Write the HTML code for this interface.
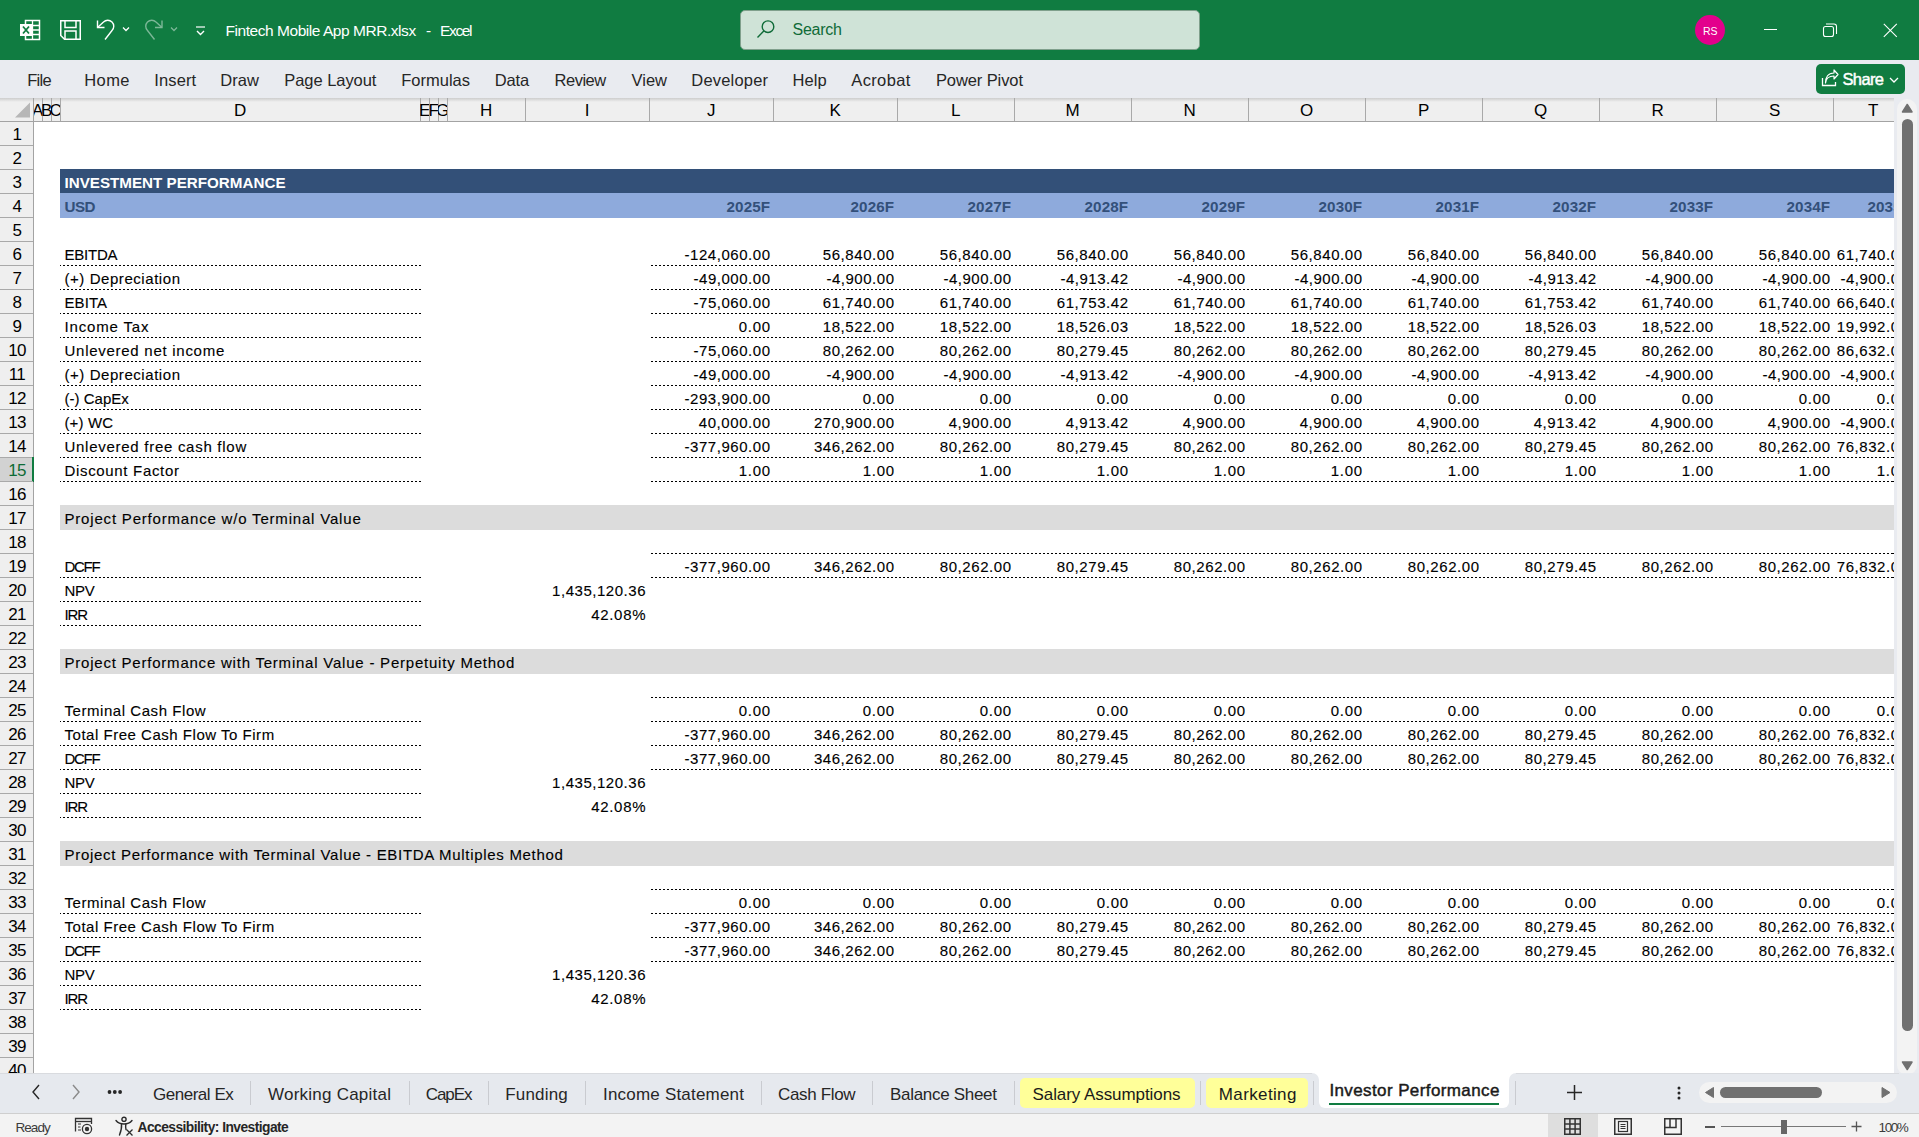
<!DOCTYPE html>
<html><head><meta charset="utf-8"><title>Excel</title>
<style>
html,body{margin:0;padding:0;}
body{width:1919px;height:1137px;position:relative;overflow:hidden;background:#fff;font-family:'Liberation Sans', sans-serif;}
</style></head><body>
<div style="position:absolute;left:0;top:0;width:1919px;height:60px;background:#107c41"></div><div style="position:absolute;left:740px;top:10px;width:458px;height:38px;background:#cfe3d7;border:1px solid #7fa08c;border-radius:5px"></div><div style="position:absolute;left:1695px;top:15px;width:30px;height:30px;border-radius:50%;background:#e3008c"></div><div style="position:absolute;left:0;top:60px;width:1919px;height:38px;background:#e9ebf0"></div><div style="position:absolute;left:1816px;top:64px;width:89px;height:30px;background:#107c41;border-radius:5px"></div><div style="position:absolute;left:0;top:98px;width:1894px;height:23px;background:#efefef"></div><div style="position:absolute;left:0;top:98px;width:1894px;height:4px;background:linear-gradient(#cdcdcd,#efefef)"></div><div style="position:absolute;left:0;top:121px;width:1894px;height:1px;background:#a3a3a3"></div><div style="position:absolute;left:0;top:122px;width:33px;height:951px;background:#efefef"></div><div style="position:absolute;left:33px;top:98px;width:1px;height:975px;background:#a3a3a3"></div><svg style="position:absolute;left:0;top:98px" width="33" height="23"><polygon points="30,4.5 30,19.5 15,19.5" fill="#b7b7b7"/></svg><div style="position:absolute;left:42px;top:98px;width:1px;height:23px;background:#a9a9a9"></div><div style="position:absolute;left:51px;top:98px;width:1px;height:23px;background:#a9a9a9"></div><div style="position:absolute;left:60px;top:98px;width:1px;height:23px;background:#a9a9a9"></div><div style="position:absolute;left:420px;top:98px;width:1px;height:23px;background:#a9a9a9"></div><div style="position:absolute;left:429px;top:98px;width:1px;height:23px;background:#a9a9a9"></div><div style="position:absolute;left:438px;top:98px;width:1px;height:23px;background:#a9a9a9"></div><div style="position:absolute;left:447px;top:98px;width:1px;height:23px;background:#a9a9a9"></div><div style="position:absolute;left:525px;top:98px;width:1px;height:23px;background:#a9a9a9"></div><div style="position:absolute;left:649px;top:98px;width:1px;height:23px;background:#a9a9a9"></div><div style="position:absolute;left:773px;top:98px;width:1px;height:23px;background:#a9a9a9"></div><div style="position:absolute;left:897px;top:98px;width:1px;height:23px;background:#a9a9a9"></div><div style="position:absolute;left:1014px;top:98px;width:1px;height:23px;background:#a9a9a9"></div><div style="position:absolute;left:1131px;top:98px;width:1px;height:23px;background:#a9a9a9"></div><div style="position:absolute;left:1248px;top:98px;width:1px;height:23px;background:#a9a9a9"></div><div style="position:absolute;left:1365px;top:98px;width:1px;height:23px;background:#a9a9a9"></div><div style="position:absolute;left:1482px;top:98px;width:1px;height:23px;background:#a9a9a9"></div><div style="position:absolute;left:1599px;top:98px;width:1px;height:23px;background:#a9a9a9"></div><div style="position:absolute;left:1716px;top:98px;width:1px;height:23px;background:#a9a9a9"></div><div style="position:absolute;left:1833px;top:98px;width:1px;height:23px;background:#a9a9a9"></div><div id="colhdr" style="position:absolute;left:34px;top:98px;width:1860px;height:23px;overflow:hidden"><div style="position:absolute;left:-1px;top:0;width:9px;height:23px;overflow:hidden"><div style="position:absolute;left:-20px;right:-20px;top:3.88px;text-align:center;font:17px/17px 'Liberation Sans', sans-serif;color:#000;letter-spacing:-0.3px">A</div></div><div style="position:absolute;left:8px;top:0;width:9px;height:23px;overflow:hidden"><div style="position:absolute;left:-20px;right:-20px;top:3.88px;text-align:center;font:17px/17px 'Liberation Sans', sans-serif;color:#000;letter-spacing:-0.3px">B</div></div><div style="position:absolute;left:17px;top:0;width:9px;height:23px;overflow:hidden"><div style="position:absolute;left:-20px;right:-20px;top:3.88px;text-align:center;font:17px/17px 'Liberation Sans', sans-serif;color:#000;letter-spacing:-0.3px">C</div></div><div style="position:absolute;left:26px;top:0;width:360px;height:23px;overflow:hidden"><div style="position:absolute;left:-20px;right:-20px;top:3.88px;text-align:center;font:17px/17px 'Liberation Sans', sans-serif;color:#000;letter-spacing:-0.3px">D</div></div><div style="position:absolute;left:386px;top:0;width:9px;height:23px;overflow:hidden"><div style="position:absolute;left:-20px;right:-20px;top:3.88px;text-align:center;font:17px/17px 'Liberation Sans', sans-serif;color:#000;letter-spacing:-0.3px">E</div></div><div style="position:absolute;left:395px;top:0;width:9px;height:23px;overflow:hidden"><div style="position:absolute;left:-20px;right:-20px;top:3.88px;text-align:center;font:17px/17px 'Liberation Sans', sans-serif;color:#000;letter-spacing:-0.3px">F</div></div><div style="position:absolute;left:404px;top:0;width:9px;height:23px;overflow:hidden"><div style="position:absolute;left:-20px;right:-20px;top:3.88px;text-align:center;font:17px/17px 'Liberation Sans', sans-serif;color:#000;letter-spacing:-0.3px">G</div></div><div style="position:absolute;left:413px;top:0;width:78px;height:23px;overflow:hidden"><div style="position:absolute;left:-20px;right:-20px;top:3.88px;text-align:center;font:17px/17px 'Liberation Sans', sans-serif;color:#000;letter-spacing:-0.3px">H</div></div><div style="position:absolute;left:491px;top:0;width:124px;height:23px;overflow:hidden"><div style="position:absolute;left:-20px;right:-20px;top:3.88px;text-align:center;font:17px/17px 'Liberation Sans', sans-serif;color:#000;letter-spacing:-0.3px">I</div></div><div style="position:absolute;left:615px;top:0;width:124px;height:23px;overflow:hidden"><div style="position:absolute;left:-20px;right:-20px;top:3.88px;text-align:center;font:17px/17px 'Liberation Sans', sans-serif;color:#000;letter-spacing:-0.3px">J</div></div><div style="position:absolute;left:739px;top:0;width:124px;height:23px;overflow:hidden"><div style="position:absolute;left:-20px;right:-20px;top:3.88px;text-align:center;font:17px/17px 'Liberation Sans', sans-serif;color:#000;letter-spacing:-0.3px">K</div></div><div style="position:absolute;left:863px;top:0;width:117px;height:23px;overflow:hidden"><div style="position:absolute;left:-20px;right:-20px;top:3.88px;text-align:center;font:17px/17px 'Liberation Sans', sans-serif;color:#000;letter-spacing:-0.3px">L</div></div><div style="position:absolute;left:980px;top:0;width:117px;height:23px;overflow:hidden"><div style="position:absolute;left:-20px;right:-20px;top:3.88px;text-align:center;font:17px/17px 'Liberation Sans', sans-serif;color:#000;letter-spacing:-0.3px">M</div></div><div style="position:absolute;left:1097px;top:0;width:117px;height:23px;overflow:hidden"><div style="position:absolute;left:-20px;right:-20px;top:3.88px;text-align:center;font:17px/17px 'Liberation Sans', sans-serif;color:#000;letter-spacing:-0.3px">N</div></div><div style="position:absolute;left:1214px;top:0;width:117px;height:23px;overflow:hidden"><div style="position:absolute;left:-20px;right:-20px;top:3.88px;text-align:center;font:17px/17px 'Liberation Sans', sans-serif;color:#000;letter-spacing:-0.3px">O</div></div><div style="position:absolute;left:1331px;top:0;width:117px;height:23px;overflow:hidden"><div style="position:absolute;left:-20px;right:-20px;top:3.88px;text-align:center;font:17px/17px 'Liberation Sans', sans-serif;color:#000;letter-spacing:-0.3px">P</div></div><div style="position:absolute;left:1448px;top:0;width:117px;height:23px;overflow:hidden"><div style="position:absolute;left:-20px;right:-20px;top:3.88px;text-align:center;font:17px/17px 'Liberation Sans', sans-serif;color:#000;letter-spacing:-0.3px">Q</div></div><div style="position:absolute;left:1565px;top:0;width:117px;height:23px;overflow:hidden"><div style="position:absolute;left:-20px;right:-20px;top:3.88px;text-align:center;font:17px/17px 'Liberation Sans', sans-serif;color:#000;letter-spacing:-0.3px">R</div></div><div style="position:absolute;left:1682px;top:0;width:117px;height:23px;overflow:hidden"><div style="position:absolute;left:-20px;right:-20px;top:3.88px;text-align:center;font:17px/17px 'Liberation Sans', sans-serif;color:#000;letter-spacing:-0.3px">S</div></div><div style="position:absolute;left:1799px;top:0;width:80px;height:23px;overflow:hidden"><div style="position:absolute;left:-20px;right:-20px;top:3.88px;text-align:center;font:17px/17px 'Liberation Sans', sans-serif;color:#000;letter-spacing:-0.3px">T</div></div></div><div style="position:absolute;left:0;top:145px;width:33px;height:1px;background:#a9a9a9"></div><div style="position:absolute;left:0;top:169px;width:33px;height:1px;background:#a9a9a9"></div><div style="position:absolute;left:0;top:193px;width:33px;height:1px;background:#a9a9a9"></div><div style="position:absolute;left:0;top:217px;width:33px;height:1px;background:#a9a9a9"></div><div style="position:absolute;left:0;top:241px;width:33px;height:1px;background:#a9a9a9"></div><div style="position:absolute;left:0;top:265px;width:33px;height:1px;background:#a9a9a9"></div><div style="position:absolute;left:0;top:289px;width:33px;height:1px;background:#a9a9a9"></div><div style="position:absolute;left:0;top:313px;width:33px;height:1px;background:#a9a9a9"></div><div style="position:absolute;left:0;top:337px;width:33px;height:1px;background:#a9a9a9"></div><div style="position:absolute;left:0;top:361px;width:33px;height:1px;background:#a9a9a9"></div><div style="position:absolute;left:0;top:385px;width:33px;height:1px;background:#a9a9a9"></div><div style="position:absolute;left:0;top:409px;width:33px;height:1px;background:#a9a9a9"></div><div style="position:absolute;left:0;top:433px;width:33px;height:1px;background:#a9a9a9"></div><div style="position:absolute;left:0;top:457px;width:33px;height:1px;background:#a9a9a9"></div><div style="position:absolute;left:0;top:458px;width:32px;height:23px;background:#d2d2d2"></div><div style="position:absolute;left:32px;top:457px;width:2px;height:25px;background:#107c41"></div><div style="position:absolute;left:0;top:481px;width:33px;height:1px;background:#a9a9a9"></div><div style="position:absolute;left:0;top:505px;width:33px;height:1px;background:#a9a9a9"></div><div style="position:absolute;left:0;top:529px;width:33px;height:1px;background:#a9a9a9"></div><div style="position:absolute;left:0;top:553px;width:33px;height:1px;background:#a9a9a9"></div><div style="position:absolute;left:0;top:577px;width:33px;height:1px;background:#a9a9a9"></div><div style="position:absolute;left:0;top:601px;width:33px;height:1px;background:#a9a9a9"></div><div style="position:absolute;left:0;top:625px;width:33px;height:1px;background:#a9a9a9"></div><div style="position:absolute;left:0;top:649px;width:33px;height:1px;background:#a9a9a9"></div><div style="position:absolute;left:0;top:673px;width:33px;height:1px;background:#a9a9a9"></div><div style="position:absolute;left:0;top:697px;width:33px;height:1px;background:#a9a9a9"></div><div style="position:absolute;left:0;top:721px;width:33px;height:1px;background:#a9a9a9"></div><div style="position:absolute;left:0;top:745px;width:33px;height:1px;background:#a9a9a9"></div><div style="position:absolute;left:0;top:769px;width:33px;height:1px;background:#a9a9a9"></div><div style="position:absolute;left:0;top:793px;width:33px;height:1px;background:#a9a9a9"></div><div style="position:absolute;left:0;top:817px;width:33px;height:1px;background:#a9a9a9"></div><div style="position:absolute;left:0;top:841px;width:33px;height:1px;background:#a9a9a9"></div><div style="position:absolute;left:0;top:865px;width:33px;height:1px;background:#a9a9a9"></div><div style="position:absolute;left:0;top:889px;width:33px;height:1px;background:#a9a9a9"></div><div style="position:absolute;left:0;top:913px;width:33px;height:1px;background:#a9a9a9"></div><div style="position:absolute;left:0;top:937px;width:33px;height:1px;background:#a9a9a9"></div><div style="position:absolute;left:0;top:961px;width:33px;height:1px;background:#a9a9a9"></div><div style="position:absolute;left:0;top:985px;width:33px;height:1px;background:#a9a9a9"></div><div style="position:absolute;left:0;top:1009px;width:33px;height:1px;background:#a9a9a9"></div><div style="position:absolute;left:0;top:1033px;width:33px;height:1px;background:#a9a9a9"></div><div style="position:absolute;left:0;top:1057px;width:33px;height:1px;background:#a9a9a9"></div><div style="position:absolute;left:0;top:0;width:33px;height:1073px;overflow:hidden"><div style="position:absolute;left:0;width:34px;top:125.88px;text-align:center;font:17px/17px 'Liberation Sans', sans-serif;color:#000;letter-spacing:-0.6px">1</div><div style="position:absolute;left:0;width:34px;top:149.88px;text-align:center;font:17px/17px 'Liberation Sans', sans-serif;color:#000;letter-spacing:-0.6px">2</div><div style="position:absolute;left:0;width:34px;top:173.88px;text-align:center;font:17px/17px 'Liberation Sans', sans-serif;color:#000;letter-spacing:-0.6px">3</div><div style="position:absolute;left:0;width:34px;top:197.88px;text-align:center;font:17px/17px 'Liberation Sans', sans-serif;color:#000;letter-spacing:-0.6px">4</div><div style="position:absolute;left:0;width:34px;top:221.88px;text-align:center;font:17px/17px 'Liberation Sans', sans-serif;color:#000;letter-spacing:-0.6px">5</div><div style="position:absolute;left:0;width:34px;top:245.88px;text-align:center;font:17px/17px 'Liberation Sans', sans-serif;color:#000;letter-spacing:-0.6px">6</div><div style="position:absolute;left:0;width:34px;top:269.88px;text-align:center;font:17px/17px 'Liberation Sans', sans-serif;color:#000;letter-spacing:-0.6px">7</div><div style="position:absolute;left:0;width:34px;top:293.88px;text-align:center;font:17px/17px 'Liberation Sans', sans-serif;color:#000;letter-spacing:-0.6px">8</div><div style="position:absolute;left:0;width:34px;top:317.88px;text-align:center;font:17px/17px 'Liberation Sans', sans-serif;color:#000;letter-spacing:-0.6px">9</div><div style="position:absolute;left:0;width:34px;top:341.88px;text-align:center;font:17px/17px 'Liberation Sans', sans-serif;color:#000;letter-spacing:-0.6px">10</div><div style="position:absolute;left:0;width:34px;top:365.88px;text-align:center;font:17px/17px 'Liberation Sans', sans-serif;color:#000;letter-spacing:-0.6px">11</div><div style="position:absolute;left:0;width:34px;top:389.88px;text-align:center;font:17px/17px 'Liberation Sans', sans-serif;color:#000;letter-spacing:-0.6px">12</div><div style="position:absolute;left:0;width:34px;top:413.88px;text-align:center;font:17px/17px 'Liberation Sans', sans-serif;color:#000;letter-spacing:-0.6px">13</div><div style="position:absolute;left:0;width:34px;top:437.88px;text-align:center;font:17px/17px 'Liberation Sans', sans-serif;color:#000;letter-spacing:-0.6px">14</div><div style="position:absolute;left:0;width:34px;top:461.88px;text-align:center;font:17px/17px 'Liberation Sans', sans-serif;color:#0e6b36;letter-spacing:-0.6px">15</div><div style="position:absolute;left:0;width:34px;top:485.88px;text-align:center;font:17px/17px 'Liberation Sans', sans-serif;color:#000;letter-spacing:-0.6px">16</div><div style="position:absolute;left:0;width:34px;top:509.88px;text-align:center;font:17px/17px 'Liberation Sans', sans-serif;color:#000;letter-spacing:-0.6px">17</div><div style="position:absolute;left:0;width:34px;top:533.88px;text-align:center;font:17px/17px 'Liberation Sans', sans-serif;color:#000;letter-spacing:-0.6px">18</div><div style="position:absolute;left:0;width:34px;top:557.88px;text-align:center;font:17px/17px 'Liberation Sans', sans-serif;color:#000;letter-spacing:-0.6px">19</div><div style="position:absolute;left:0;width:34px;top:581.88px;text-align:center;font:17px/17px 'Liberation Sans', sans-serif;color:#000;letter-spacing:-0.6px">20</div><div style="position:absolute;left:0;width:34px;top:605.88px;text-align:center;font:17px/17px 'Liberation Sans', sans-serif;color:#000;letter-spacing:-0.6px">21</div><div style="position:absolute;left:0;width:34px;top:629.88px;text-align:center;font:17px/17px 'Liberation Sans', sans-serif;color:#000;letter-spacing:-0.6px">22</div><div style="position:absolute;left:0;width:34px;top:653.88px;text-align:center;font:17px/17px 'Liberation Sans', sans-serif;color:#000;letter-spacing:-0.6px">23</div><div style="position:absolute;left:0;width:34px;top:677.88px;text-align:center;font:17px/17px 'Liberation Sans', sans-serif;color:#000;letter-spacing:-0.6px">24</div><div style="position:absolute;left:0;width:34px;top:701.88px;text-align:center;font:17px/17px 'Liberation Sans', sans-serif;color:#000;letter-spacing:-0.6px">25</div><div style="position:absolute;left:0;width:34px;top:725.88px;text-align:center;font:17px/17px 'Liberation Sans', sans-serif;color:#000;letter-spacing:-0.6px">26</div><div style="position:absolute;left:0;width:34px;top:749.88px;text-align:center;font:17px/17px 'Liberation Sans', sans-serif;color:#000;letter-spacing:-0.6px">27</div><div style="position:absolute;left:0;width:34px;top:773.88px;text-align:center;font:17px/17px 'Liberation Sans', sans-serif;color:#000;letter-spacing:-0.6px">28</div><div style="position:absolute;left:0;width:34px;top:797.88px;text-align:center;font:17px/17px 'Liberation Sans', sans-serif;color:#000;letter-spacing:-0.6px">29</div><div style="position:absolute;left:0;width:34px;top:821.88px;text-align:center;font:17px/17px 'Liberation Sans', sans-serif;color:#000;letter-spacing:-0.6px">30</div><div style="position:absolute;left:0;width:34px;top:845.88px;text-align:center;font:17px/17px 'Liberation Sans', sans-serif;color:#000;letter-spacing:-0.6px">31</div><div style="position:absolute;left:0;width:34px;top:869.88px;text-align:center;font:17px/17px 'Liberation Sans', sans-serif;color:#000;letter-spacing:-0.6px">32</div><div style="position:absolute;left:0;width:34px;top:893.88px;text-align:center;font:17px/17px 'Liberation Sans', sans-serif;color:#000;letter-spacing:-0.6px">33</div><div style="position:absolute;left:0;width:34px;top:917.88px;text-align:center;font:17px/17px 'Liberation Sans', sans-serif;color:#000;letter-spacing:-0.6px">34</div><div style="position:absolute;left:0;width:34px;top:941.88px;text-align:center;font:17px/17px 'Liberation Sans', sans-serif;color:#000;letter-spacing:-0.6px">35</div><div style="position:absolute;left:0;width:34px;top:965.88px;text-align:center;font:17px/17px 'Liberation Sans', sans-serif;color:#000;letter-spacing:-0.6px">36</div><div style="position:absolute;left:0;width:34px;top:989.88px;text-align:center;font:17px/17px 'Liberation Sans', sans-serif;color:#000;letter-spacing:-0.6px">37</div><div style="position:absolute;left:0;width:34px;top:1013.88px;text-align:center;font:17px/17px 'Liberation Sans', sans-serif;color:#000;letter-spacing:-0.6px">38</div><div style="position:absolute;left:0;width:34px;top:1037.88px;text-align:center;font:17px/17px 'Liberation Sans', sans-serif;color:#000;letter-spacing:-0.6px">39</div><div style="position:absolute;left:0;width:34px;top:1061.88px;text-align:center;font:17px/17px 'Liberation Sans', sans-serif;color:#000;letter-spacing:-0.6px">40</div></div><div style="position:absolute;left:34px;top:122px;width:1860px;height:951px;background:#fff"></div><div style="position:absolute;left:60px;top:169px;width:1834px;height:24px;background:#335078"></div><div style="position:absolute;left:60px;top:193px;width:1834px;height:25px;background:#8eaadc"></div><div style="position:absolute;left:60px;top:505px;width:1834px;height:25px;background:#dcdcdc"></div><div style="position:absolute;left:60px;top:649px;width:1834px;height:25px;background:#dcdcdc"></div><div style="position:absolute;left:60px;top:841px;width:1834px;height:25px;background:#dcdcdc"></div><div style="position:absolute;left:60px;top:265px;width:361px;height:1px;background:repeating-linear-gradient(90deg,#000 0 2px,transparent 2px 4px);background-position:-1px 0"></div><div style="position:absolute;left:649px;top:265px;width:1245px;height:1px;background:repeating-linear-gradient(90deg,#000 0 2px,transparent 2px 4px);background-position:-2px 0"></div><div style="position:absolute;left:60px;top:289px;width:361px;height:1px;background:repeating-linear-gradient(90deg,#000 0 2px,transparent 2px 4px);background-position:-1px 0"></div><div style="position:absolute;left:649px;top:289px;width:1245px;height:1px;background:repeating-linear-gradient(90deg,#000 0 2px,transparent 2px 4px);background-position:-2px 0"></div><div style="position:absolute;left:60px;top:313px;width:361px;height:1px;background:repeating-linear-gradient(90deg,#000 0 2px,transparent 2px 4px);background-position:-1px 0"></div><div style="position:absolute;left:649px;top:313px;width:1245px;height:1px;background:repeating-linear-gradient(90deg,#000 0 2px,transparent 2px 4px);background-position:-2px 0"></div><div style="position:absolute;left:60px;top:337px;width:361px;height:1px;background:repeating-linear-gradient(90deg,#000 0 2px,transparent 2px 4px);background-position:-1px 0"></div><div style="position:absolute;left:649px;top:337px;width:1245px;height:1px;background:repeating-linear-gradient(90deg,#000 0 2px,transparent 2px 4px);background-position:-2px 0"></div><div style="position:absolute;left:60px;top:361px;width:361px;height:1px;background:repeating-linear-gradient(90deg,#000 0 2px,transparent 2px 4px);background-position:-1px 0"></div><div style="position:absolute;left:649px;top:361px;width:1245px;height:1px;background:repeating-linear-gradient(90deg,#000 0 2px,transparent 2px 4px);background-position:-2px 0"></div><div style="position:absolute;left:60px;top:385px;width:361px;height:1px;background:repeating-linear-gradient(90deg,#000 0 2px,transparent 2px 4px);background-position:-1px 0"></div><div style="position:absolute;left:649px;top:385px;width:1245px;height:1px;background:repeating-linear-gradient(90deg,#000 0 2px,transparent 2px 4px);background-position:-2px 0"></div><div style="position:absolute;left:60px;top:409px;width:361px;height:1px;background:repeating-linear-gradient(90deg,#000 0 2px,transparent 2px 4px);background-position:-1px 0"></div><div style="position:absolute;left:649px;top:409px;width:1245px;height:1px;background:repeating-linear-gradient(90deg,#000 0 2px,transparent 2px 4px);background-position:-2px 0"></div><div style="position:absolute;left:60px;top:433px;width:361px;height:1px;background:repeating-linear-gradient(90deg,#000 0 2px,transparent 2px 4px);background-position:-1px 0"></div><div style="position:absolute;left:649px;top:433px;width:1245px;height:1px;background:repeating-linear-gradient(90deg,#000 0 2px,transparent 2px 4px);background-position:-2px 0"></div><div style="position:absolute;left:60px;top:457px;width:361px;height:1px;background:repeating-linear-gradient(90deg,#000 0 2px,transparent 2px 4px);background-position:-1px 0"></div><div style="position:absolute;left:649px;top:457px;width:1245px;height:1px;background:repeating-linear-gradient(90deg,#000 0 2px,transparent 2px 4px);background-position:-2px 0"></div><div style="position:absolute;left:60px;top:481px;width:361px;height:1px;background:repeating-linear-gradient(90deg,#000 0 2px,transparent 2px 4px);background-position:-1px 0"></div><div style="position:absolute;left:649px;top:481px;width:1245px;height:1px;background:repeating-linear-gradient(90deg,#000 0 2px,transparent 2px 4px);background-position:-2px 0"></div><div style="position:absolute;left:60px;top:577px;width:361px;height:1px;background:repeating-linear-gradient(90deg,#000 0 2px,transparent 2px 4px);background-position:-1px 0"></div><div style="position:absolute;left:649px;top:577px;width:1245px;height:1px;background:repeating-linear-gradient(90deg,#000 0 2px,transparent 2px 4px);background-position:-2px 0"></div><div style="position:absolute;left:60px;top:721px;width:361px;height:1px;background:repeating-linear-gradient(90deg,#000 0 2px,transparent 2px 4px);background-position:-1px 0"></div><div style="position:absolute;left:649px;top:721px;width:1245px;height:1px;background:repeating-linear-gradient(90deg,#000 0 2px,transparent 2px 4px);background-position:-2px 0"></div><div style="position:absolute;left:60px;top:745px;width:361px;height:1px;background:repeating-linear-gradient(90deg,#000 0 2px,transparent 2px 4px);background-position:-1px 0"></div><div style="position:absolute;left:649px;top:745px;width:1245px;height:1px;background:repeating-linear-gradient(90deg,#000 0 2px,transparent 2px 4px);background-position:-2px 0"></div><div style="position:absolute;left:60px;top:769px;width:361px;height:1px;background:repeating-linear-gradient(90deg,#000 0 2px,transparent 2px 4px);background-position:-1px 0"></div><div style="position:absolute;left:649px;top:769px;width:1245px;height:1px;background:repeating-linear-gradient(90deg,#000 0 2px,transparent 2px 4px);background-position:-2px 0"></div><div style="position:absolute;left:60px;top:913px;width:361px;height:1px;background:repeating-linear-gradient(90deg,#000 0 2px,transparent 2px 4px);background-position:-1px 0"></div><div style="position:absolute;left:649px;top:913px;width:1245px;height:1px;background:repeating-linear-gradient(90deg,#000 0 2px,transparent 2px 4px);background-position:-2px 0"></div><div style="position:absolute;left:60px;top:937px;width:361px;height:1px;background:repeating-linear-gradient(90deg,#000 0 2px,transparent 2px 4px);background-position:-1px 0"></div><div style="position:absolute;left:649px;top:937px;width:1245px;height:1px;background:repeating-linear-gradient(90deg,#000 0 2px,transparent 2px 4px);background-position:-2px 0"></div><div style="position:absolute;left:60px;top:961px;width:361px;height:1px;background:repeating-linear-gradient(90deg,#000 0 2px,transparent 2px 4px);background-position:-1px 0"></div><div style="position:absolute;left:649px;top:961px;width:1245px;height:1px;background:repeating-linear-gradient(90deg,#000 0 2px,transparent 2px 4px);background-position:-2px 0"></div><div style="position:absolute;left:649px;top:553px;width:1245px;height:1px;background:repeating-linear-gradient(90deg,#000 0 2px,transparent 2px 4px);background-position:-2px 0"></div><div style="position:absolute;left:649px;top:697px;width:1245px;height:1px;background:repeating-linear-gradient(90deg,#000 0 2px,transparent 2px 4px);background-position:-2px 0"></div><div style="position:absolute;left:649px;top:889px;width:1245px;height:1px;background:repeating-linear-gradient(90deg,#000 0 2px,transparent 2px 4px);background-position:-2px 0"></div><div style="position:absolute;left:60px;top:601px;width:361px;height:1px;background:repeating-linear-gradient(90deg,#000 0 2px,transparent 2px 4px);background-position:-1px 0"></div><div style="position:absolute;left:60px;top:793px;width:361px;height:1px;background:repeating-linear-gradient(90deg,#000 0 2px,transparent 2px 4px);background-position:-1px 0"></div><div style="position:absolute;left:60px;top:985px;width:361px;height:1px;background:repeating-linear-gradient(90deg,#000 0 2px,transparent 2px 4px);background-position:-1px 0"></div><div style="position:absolute;left:60px;top:625px;width:361px;height:1px;background:repeating-linear-gradient(90deg,#000 0 2px,transparent 2px 4px);background-position:-1px 0"></div><div style="position:absolute;left:60px;top:817px;width:361px;height:1px;background:repeating-linear-gradient(90deg,#000 0 2px,transparent 2px 4px);background-position:-1px 0"></div><div style="position:absolute;left:60px;top:1009px;width:361px;height:1px;background:repeating-linear-gradient(90deg,#000 0 2px,transparent 2px 4px);background-position:-1px 0"></div><div style="position:absolute;left:1894px;top:98px;width:25px;height:975px;background:#e9ebf0"></div><div style="position:absolute;left:1897px;top:99px;width:20px;height:976px;background:#f3f3f3;border-radius:10px"></div><svg style="position:absolute;left:1897px;top:99px" width="20" height="20"><polygon points="5.5,13 15,13 10.25,5.5" fill="#707070" stroke="#707070" stroke-width="1.5" stroke-linejoin="round"/></svg><div style="position:absolute;left:1902px;top:119px;width:11px;height:912px;background:#707070;border-radius:6px"></div><svg style="position:absolute;left:1897px;top:1055px" width="20" height="20"><polygon points="5.5,7 15,7 10.25,14.5" fill="#707070" stroke="#707070" stroke-width="1.5" stroke-linejoin="round"/></svg><div style="position:absolute;left:0;top:1073px;width:1919px;height:40px;background:#e6e9ee"></div><div style="position:absolute;left:0;top:1073px;width:1319px;height:1px;background:#d9dbdf"></div><div style="position:absolute;left:1509px;top:1073px;width:390px;height:1px;background:#d9dbdf"></div><div style="position:absolute;left:0;top:1113px;width:1919px;height:1px;background:#cfcfcf"></div><div style="position:absolute;left:0;top:1114px;width:1919px;height:23px;background:#f3f3f3"></div><div style="position:absolute;left:250px;top:1081px;width:1px;height:24px;background:#c9cbd0"></div><div style="position:absolute;left:409px;top:1081px;width:1px;height:24px;background:#c9cbd0"></div><div style="position:absolute;left:488px;top:1081px;width:1px;height:24px;background:#c9cbd0"></div><div style="position:absolute;left:585px;top:1081px;width:1px;height:24px;background:#c9cbd0"></div><div style="position:absolute;left:761px;top:1081px;width:1px;height:24px;background:#c9cbd0"></div><div style="position:absolute;left:872px;top:1081px;width:1px;height:24px;background:#c9cbd0"></div><div style="position:absolute;left:1014px;top:1081px;width:1px;height:24px;background:#c9cbd0"></div><div style="position:absolute;left:1200px;top:1081px;width:1px;height:24px;background:#c9cbd0"></div><div style="position:absolute;left:1313px;top:1081px;width:1px;height:24px;background:#c9cbd0"></div><div style="position:absolute;left:1515px;top:1081px;width:1px;height:24px;background:#c9cbd0"></div><div style="position:absolute;left:1020px;top:1078px;width:175px;height:30px;background:#ffff99;border-radius:5px"></div><div style="position:absolute;left:1206px;top:1078px;width:102px;height:30px;background:#ffff99;border-radius:5px"></div><div style="position:absolute;left:1319px;top:1073px;width:190px;height:35px;background:#fff;border-radius:0 0 6px 6px"></div><div style="position:absolute;left:1329px;top:1103px;width:170px;height:2px;background:#107c41"></div><div style="position:absolute;left:1312px;top:1073px;width:7px;height:7px;background:#fff"></div><div style="position:absolute;left:1312px;top:1073px;width:7px;height:7px;background:#e6e9ee;border-top-right-radius:7px"></div><div style="position:absolute;left:1509px;top:1073px;width:7px;height:7px;background:#fff"></div><div style="position:absolute;left:1509px;top:1073px;width:7px;height:7px;background:#e6e9ee;border-top-left-radius:7px"></div><svg style="position:absolute;left:1560px;top:1078px" width="30" height="30"><path d="M7 14.5H22M14.5 7V22" stroke="#262626" stroke-width="1.5"/></svg><svg style="position:absolute;left:1670px;top:1080px" width="20" height="24"><circle cx="9" cy="8" r="1.5" fill="#262626"/><circle cx="9" cy="13" r="1.5" fill="#262626"/><circle cx="9" cy="18" r="1.5" fill="#262626"/></svg><div style="position:absolute;left:1699px;top:1082px;width:198px;height:21px;background:#f3f3f3;border-radius:11px"></div><svg style="position:absolute;left:1699px;top:1082px" width="198" height="21"><polygon points="14.5,5.5 14.5,15.5 6.5,10.5" fill="#707070" stroke="#707070" stroke-linejoin="round"/><polygon points="183,5.5 183,15.5 191,10.5" fill="#707070" stroke="#707070" stroke-linejoin="round"/></svg><div style="position:absolute;left:1720px;top:1087px;width:102px;height:11px;background:#707070;border-radius:6px"></div><div style="position:absolute;left:1548px;top:1114px;width:50px;height:23px;background:#dedede"></div><div style="position:absolute;left:1721px;top:1126px;width:125px;height:1px;background:#777"></div><div style="position:absolute;left:1781px;top:1120px;width:6px;height:14px;background:#666"></div><div style="position:absolute;left:1705px;top:1126px;width:10px;height:1.5px;background:#555"></div><svg style="position:absolute;left:1849px;top:1119px" width="15" height="15"><path d="M2.5 7.5H12.5M7.5 2.5V12.5" stroke="#555" stroke-width="1.3"/></svg>
<svg style="position:absolute;left:18px;top:18px" width="24" height="24" viewBox="0 0 24 24">
 <rect x="7.5" y="2.5" width="14" height="19" fill="none" stroke="#fff" stroke-width="1.5"/>
 <path d="M7.5 7.5H21.5M7.5 12H21.5M7.5 16.5H21.5M14.5 2.5V21.5" stroke="#fff" stroke-width="1.3"/>
 <rect x="2" y="6" width="12" height="12" fill="#fff"/>
 <path d="M5 8.5L11 15.5M11 8.5L5 15.5" stroke="#107c41" stroke-width="1.8"/>
</svg>
<svg style="position:absolute;left:58px;top:18px" width="24" height="24" viewBox="0 0 24 24">
 <path d="M2.75 2.75H22.25V21.25H6.5L2.75 17.5Z" fill="none" stroke="#fff" stroke-width="1.5"/>
 <path d="M7 3V9.5H18V3" fill="none" stroke="#fff" stroke-width="1.5"/>
 <path d="M7 21V13H18V21" fill="none" stroke="#fff" stroke-width="1.5"/>
</svg>
<svg style="position:absolute;left:94px;top:18px" width="40" height="24" viewBox="0 0 40 24">
 <path d="M3.5 2.5V9.5H10.5" fill="none" stroke="#fff" stroke-width="1.4"/>
 <path d="M3.8 9.2L9.5 4A6 6 0 0 1 18 12.5L11 21.5" fill="none" stroke="#fff" stroke-width="1.4"/>
 <path d="M29 9.5L32 12.5L35 9.5" fill="none" stroke="#fff" stroke-width="1.3"/>
</svg>
<svg style="position:absolute;left:142px;top:18px" width="40" height="24" viewBox="0 0 40 24" opacity="0.45">
 <path d="M20 2.5V9.5H13" fill="none" stroke="#fff" stroke-width="1.4"/>
 <path d="M19.7 9.2L14 4A6 6 0 0 0 5.5 12.5L12.5 21.5" fill="none" stroke="#fff" stroke-width="1.4"/>
 <path d="M29 9.5L32 12.5L35 9.5" fill="none" stroke="#fff" stroke-width="1.3"/>
</svg>
<svg style="position:absolute;left:192px;top:18px" width="16" height="24" viewBox="0 0 16 24">
 <path d="M4 9H13" stroke="#fff" stroke-width="1.2"/>
 <path d="M5 13L8.5 16.5L12 13" fill="none" stroke="#fff" stroke-width="1.4"/>
</svg>
<svg style="position:absolute;left:754px;top:18px" width="24" height="24" viewBox="0 0 24 24">
 <circle cx="14" cy="8.7" r="5.8" fill="none" stroke="#0f6b38" stroke-width="1.4"/>
 <path d="M9.8 13L3.5 19.5" stroke="#0f6b38" stroke-width="1.4"/>
</svg>
<div style="position:absolute;left:1764px;top:29px;width:13px;height:1px;background:#fff"></div>
<svg style="position:absolute;left:1820px;top:20px" width="20" height="20" viewBox="0 0 20 20">
 <rect x="3.5" y="6.5" width="10" height="10" rx="2" fill="none" stroke="#fff" stroke-width="1.1"/>
 <path d="M6 4H14A2.5 2.5 0 0 1 16.5 6.5V14" fill="none" stroke="#fff" stroke-width="1.1"/>
</svg>
<svg style="position:absolute;left:1880px;top:20px" width="20" height="20" viewBox="0 0 20 20">
 <path d="M3.8 3.8L16.8 16.8M16.8 3.8L3.8 16.8" stroke="#fff" stroke-width="1.1"/>
</svg>
<svg style="position:absolute;left:1820px;top:68px" width="20" height="22" viewBox="0 0 20 22">
 <path d="M2.5 10V17.5H15.5V14" fill="none" stroke="#fff" stroke-width="1.3"/>
 <path d="M5.5 15C6 10 9 8 14 8V11L18 6.5L14 2V5C8 5 5.5 9 5.5 15Z" fill="none" stroke="#fff" stroke-width="1.2" stroke-linejoin="round"/>
</svg>
<svg style="position:absolute;left:1887px;top:74px" width="14" height="12" viewBox="0 0 14 12">
 <path d="M3 4L7 8L11 4" fill="none" stroke="#fff" stroke-width="1.3"/>
</svg>
<svg style="position:absolute;left:26px;top:1080px" width="20" height="24" viewBox="0 0 20 24">
 <path d="M13 5L7 12L13 19" fill="none" stroke="#262626" stroke-width="1.4"/>
</svg>
<svg style="position:absolute;left:66px;top:1080px" width="20" height="24" viewBox="0 0 20 24">
 <path d="M7 5L13 12L7 19" fill="none" stroke="#8a8a8a" stroke-width="1.4"/>
</svg>
<svg style="position:absolute;left:104px;top:1082px" width="22" height="20" viewBox="0 0 22 20">
 <circle cx="5.5" cy="10" r="1.9" fill="#262626"/><circle cx="10.8" cy="10" r="1.9" fill="#262626"/><circle cx="16.1" cy="10" r="1.9" fill="#262626"/>
</svg>
<svg style="position:absolute;left:73px;top:1116px" width="22" height="20" viewBox="0 0 22 20">
 <path d="M2.5 15.5V2.5H18.5V8" fill="none" stroke="#333" stroke-width="1.3"/>
 <path d="M2.5 5.5H18.5" stroke="#333" stroke-width="1.3"/>
 <path d="M5 8H8M5 11H7.5M5 14H8" stroke="#333" stroke-width="1.1"/>
 <circle cx="14" cy="13" r="4.6" fill="none" stroke="#333" stroke-width="1.3"/>
 <circle cx="14" cy="13" r="2.2" fill="#333"/>
</svg>
<svg style="position:absolute;left:113px;top:1116px" width="22" height="21" viewBox="0 0 22 21">
 <circle cx="11" cy="3.3" r="2.1" fill="none" stroke="#2b2b2b" stroke-width="1.4"/>
 <path d="M3 4.5C5 7 7.5 8 11 8C14.5 8 17 7 19 4.5" fill="none" stroke="#2b2b2b" stroke-width="1.4" stroke-linecap="round"/>
 <path d="M8.5 8.2C8.8 11 8.5 14 6.5 19M12.8 8.2C12.5 10.5 12.5 12 13 13.5" fill="none" stroke="#2b2b2b" stroke-width="1.4" stroke-linecap="round"/>
 <path d="M13.5 13.5L19.5 19.5M19.5 13.5L13.5 19.5" stroke="#2b2b2b" stroke-width="1.3"/>
</svg>
<svg style="position:absolute;left:1562px;top:1117px" width="20" height="19" viewBox="0 0 20 19">
 <rect x="2.75" y="1.75" width="15.5" height="15.5" fill="none" stroke="#333" stroke-width="1.5"/>
 <path d="M7.9 2V17M13.1 2V17M3 6.9H18M3 12.1H18" stroke="#333" stroke-width="1.5"/>
</svg>
<svg style="position:absolute;left:1612px;top:1117px" width="22" height="19" viewBox="0 0 22 19">
 <rect x="2.75" y="1.75" width="16.5" height="15.5" fill="none" stroke="#333" stroke-width="1.5"/>
 <rect x="6.5" y="4.5" width="9" height="10" fill="none" stroke="#333" stroke-width="1.2"/>
 <path d="M8.5 7.5H13.5M8.5 9.5H13.5M8.5 11.5H13.5" stroke="#333" stroke-width="1"/>
</svg>
<svg style="position:absolute;left:1662px;top:1117px" width="22" height="19" viewBox="0 0 22 19">
 <rect x="2.75" y="1.75" width="16.5" height="15.5" fill="none" stroke="#333" stroke-width="1.5"/>
 <path d="M8 2V10.5H14V2M3 10.5H8" fill="none" stroke="#333" stroke-width="1.5"/>
</svg>

<div style="position:absolute;left:0;top:0;width:1894px;height:1137px;overflow:hidden">
<span style="position:absolute;top:175.38px;font:700 15.2px/15.2px 'Liberation Sans', sans-serif;color:#fff;white-space:nowrap;letter-spacing:-0.003px;;left:64.50px;">INVESTMENT PERFORMANCE</span><span style="position:absolute;top:199.38px;font:700 15.2px/15.2px 'Liberation Sans', sans-serif;color:#33507a;white-space:nowrap;letter-spacing:-0.533px;;left:64.50px;">USD</span><span style="position:absolute;top:199.38px;font:700 15.2px/15.2px 'Liberation Sans', sans-serif;color:#33507a;white-space:nowrap;letter-spacing:0.109px;;right:1123.89px;text-align:right;">2025F</span><span style="position:absolute;top:199.38px;font:700 15.2px/15.2px 'Liberation Sans', sans-serif;color:#33507a;white-space:nowrap;letter-spacing:0.109px;;right:999.89px;text-align:right;">2026F</span><span style="position:absolute;top:199.38px;font:700 15.2px/15.2px 'Liberation Sans', sans-serif;color:#33507a;white-space:nowrap;letter-spacing:0.109px;;right:882.89px;text-align:right;">2027F</span><span style="position:absolute;top:199.38px;font:700 15.2px/15.2px 'Liberation Sans', sans-serif;color:#33507a;white-space:nowrap;letter-spacing:0.109px;;right:765.89px;text-align:right;">2028F</span><span style="position:absolute;top:199.38px;font:700 15.2px/15.2px 'Liberation Sans', sans-serif;color:#33507a;white-space:nowrap;letter-spacing:0.109px;;right:648.89px;text-align:right;">2029F</span><span style="position:absolute;top:199.38px;font:700 15.2px/15.2px 'Liberation Sans', sans-serif;color:#33507a;white-space:nowrap;letter-spacing:0.109px;;right:531.89px;text-align:right;">2030F</span><span style="position:absolute;top:199.38px;font:700 15.2px/15.2px 'Liberation Sans', sans-serif;color:#33507a;white-space:nowrap;letter-spacing:0.109px;;right:414.89px;text-align:right;">2031F</span><span style="position:absolute;top:199.38px;font:700 15.2px/15.2px 'Liberation Sans', sans-serif;color:#33507a;white-space:nowrap;letter-spacing:0.109px;;right:297.89px;text-align:right;">2032F</span><span style="position:absolute;top:199.38px;font:700 15.2px/15.2px 'Liberation Sans', sans-serif;color:#33507a;white-space:nowrap;letter-spacing:0.109px;;right:180.89px;text-align:right;">2033F</span><span style="position:absolute;top:199.38px;font:700 15.2px/15.2px 'Liberation Sans', sans-serif;color:#33507a;white-space:nowrap;letter-spacing:0.109px;;right:63.89px;text-align:right;">2034F</span><span style="position:absolute;top:199.38px;font:700 15.2px/15.2px 'Liberation Sans', sans-serif;color:#33507a;white-space:nowrap;letter-spacing:0.109px;;right:-17.11px;text-align:right;">2035F</span><span style="position:absolute;top:246.54px;font:400 15px/15px 'Liberation Sans', sans-serif;color:#000;white-space:nowrap;letter-spacing:-0.235px;-webkit-text-stroke:0.12px #000;left:64.50px;">EBITDA</span><span style="position:absolute;top:246.54px;font:400 15px/15px 'Liberation Sans', sans-serif;color:#000;white-space:nowrap;letter-spacing:0.534px;-webkit-text-stroke:0.12px #000;right:1123.47px;text-align:right;">-124,060.00</span><span style="position:absolute;top:246.54px;font:400 15px/15px 'Liberation Sans', sans-serif;color:#000;white-space:nowrap;letter-spacing:0.556px;-webkit-text-stroke:0.12px #000;right:999.44px;text-align:right;">56,840.00</span><span style="position:absolute;top:246.54px;font:400 15px/15px 'Liberation Sans', sans-serif;color:#000;white-space:nowrap;letter-spacing:0.556px;-webkit-text-stroke:0.12px #000;right:882.44px;text-align:right;">56,840.00</span><span style="position:absolute;top:246.54px;font:400 15px/15px 'Liberation Sans', sans-serif;color:#000;white-space:nowrap;letter-spacing:0.556px;-webkit-text-stroke:0.12px #000;right:765.44px;text-align:right;">56,840.00</span><span style="position:absolute;top:246.54px;font:400 15px/15px 'Liberation Sans', sans-serif;color:#000;white-space:nowrap;letter-spacing:0.556px;-webkit-text-stroke:0.12px #000;right:648.44px;text-align:right;">56,840.00</span><span style="position:absolute;top:246.54px;font:400 15px/15px 'Liberation Sans', sans-serif;color:#000;white-space:nowrap;letter-spacing:0.556px;-webkit-text-stroke:0.12px #000;right:531.44px;text-align:right;">56,840.00</span><span style="position:absolute;top:246.54px;font:400 15px/15px 'Liberation Sans', sans-serif;color:#000;white-space:nowrap;letter-spacing:0.556px;-webkit-text-stroke:0.12px #000;right:414.44px;text-align:right;">56,840.00</span><span style="position:absolute;top:246.54px;font:400 15px/15px 'Liberation Sans', sans-serif;color:#000;white-space:nowrap;letter-spacing:0.556px;-webkit-text-stroke:0.12px #000;right:297.44px;text-align:right;">56,840.00</span><span style="position:absolute;top:246.54px;font:400 15px/15px 'Liberation Sans', sans-serif;color:#000;white-space:nowrap;letter-spacing:0.556px;-webkit-text-stroke:0.12px #000;right:180.44px;text-align:right;">56,840.00</span><span style="position:absolute;top:246.54px;font:400 15px/15px 'Liberation Sans', sans-serif;color:#000;white-space:nowrap;letter-spacing:0.556px;-webkit-text-stroke:0.12px #000;right:63.44px;text-align:right;">56,840.00</span><span style="position:absolute;top:246.54px;font:400 15px/15px 'Liberation Sans', sans-serif;color:#000;white-space:nowrap;letter-spacing:0.556px;-webkit-text-stroke:0.12px #000;right:-14.56px;text-align:right;">61,740.00</span><span style="position:absolute;top:270.54px;font:400 15px/15px 'Liberation Sans', sans-serif;color:#000;white-space:nowrap;letter-spacing:0.558px;-webkit-text-stroke:0.12px #000;left:64.50px;">(+) Depreciation</span><span style="position:absolute;top:270.54px;font:400 15px/15px 'Liberation Sans', sans-serif;color:#000;white-space:nowrap;letter-spacing:0.531px;-webkit-text-stroke:0.12px #000;right:1123.47px;text-align:right;">-49,000.00</span><span style="position:absolute;top:270.54px;font:400 15px/15px 'Liberation Sans', sans-serif;color:#000;white-space:nowrap;letter-spacing:0.528px;-webkit-text-stroke:0.12px #000;right:999.47px;text-align:right;">-4,900.00</span><span style="position:absolute;top:270.54px;font:400 15px/15px 'Liberation Sans', sans-serif;color:#000;white-space:nowrap;letter-spacing:0.528px;-webkit-text-stroke:0.12px #000;right:882.47px;text-align:right;">-4,900.00</span><span style="position:absolute;top:270.54px;font:400 15px/15px 'Liberation Sans', sans-serif;color:#000;white-space:nowrap;letter-spacing:0.528px;-webkit-text-stroke:0.12px #000;right:765.47px;text-align:right;">-4,913.42</span><span style="position:absolute;top:270.54px;font:400 15px/15px 'Liberation Sans', sans-serif;color:#000;white-space:nowrap;letter-spacing:0.528px;-webkit-text-stroke:0.12px #000;right:648.47px;text-align:right;">-4,900.00</span><span style="position:absolute;top:270.54px;font:400 15px/15px 'Liberation Sans', sans-serif;color:#000;white-space:nowrap;letter-spacing:0.528px;-webkit-text-stroke:0.12px #000;right:531.47px;text-align:right;">-4,900.00</span><span style="position:absolute;top:270.54px;font:400 15px/15px 'Liberation Sans', sans-serif;color:#000;white-space:nowrap;letter-spacing:0.528px;-webkit-text-stroke:0.12px #000;right:414.47px;text-align:right;">-4,900.00</span><span style="position:absolute;top:270.54px;font:400 15px/15px 'Liberation Sans', sans-serif;color:#000;white-space:nowrap;letter-spacing:0.528px;-webkit-text-stroke:0.12px #000;right:297.47px;text-align:right;">-4,913.42</span><span style="position:absolute;top:270.54px;font:400 15px/15px 'Liberation Sans', sans-serif;color:#000;white-space:nowrap;letter-spacing:0.528px;-webkit-text-stroke:0.12px #000;right:180.47px;text-align:right;">-4,900.00</span><span style="position:absolute;top:270.54px;font:400 15px/15px 'Liberation Sans', sans-serif;color:#000;white-space:nowrap;letter-spacing:0.528px;-webkit-text-stroke:0.12px #000;right:63.47px;text-align:right;">-4,900.00</span><span style="position:absolute;top:270.54px;font:400 15px/15px 'Liberation Sans', sans-serif;color:#000;white-space:nowrap;letter-spacing:0.528px;-webkit-text-stroke:0.12px #000;right:-14.53px;text-align:right;">-4,900.00</span><span style="position:absolute;top:294.54px;font:400 15px/15px 'Liberation Sans', sans-serif;color:#000;white-space:nowrap;letter-spacing:0.067px;-webkit-text-stroke:0.12px #000;left:64.50px;">EBITA</span><span style="position:absolute;top:294.54px;font:400 15px/15px 'Liberation Sans', sans-serif;color:#000;white-space:nowrap;letter-spacing:0.531px;-webkit-text-stroke:0.12px #000;right:1123.47px;text-align:right;">-75,060.00</span><span style="position:absolute;top:294.54px;font:400 15px/15px 'Liberation Sans', sans-serif;color:#000;white-space:nowrap;letter-spacing:0.556px;-webkit-text-stroke:0.12px #000;right:999.44px;text-align:right;">61,740.00</span><span style="position:absolute;top:294.54px;font:400 15px/15px 'Liberation Sans', sans-serif;color:#000;white-space:nowrap;letter-spacing:0.556px;-webkit-text-stroke:0.12px #000;right:882.44px;text-align:right;">61,740.00</span><span style="position:absolute;top:294.54px;font:400 15px/15px 'Liberation Sans', sans-serif;color:#000;white-space:nowrap;letter-spacing:0.556px;-webkit-text-stroke:0.12px #000;right:765.44px;text-align:right;">61,753.42</span><span style="position:absolute;top:294.54px;font:400 15px/15px 'Liberation Sans', sans-serif;color:#000;white-space:nowrap;letter-spacing:0.556px;-webkit-text-stroke:0.12px #000;right:648.44px;text-align:right;">61,740.00</span><span style="position:absolute;top:294.54px;font:400 15px/15px 'Liberation Sans', sans-serif;color:#000;white-space:nowrap;letter-spacing:0.556px;-webkit-text-stroke:0.12px #000;right:531.44px;text-align:right;">61,740.00</span><span style="position:absolute;top:294.54px;font:400 15px/15px 'Liberation Sans', sans-serif;color:#000;white-space:nowrap;letter-spacing:0.556px;-webkit-text-stroke:0.12px #000;right:414.44px;text-align:right;">61,740.00</span><span style="position:absolute;top:294.54px;font:400 15px/15px 'Liberation Sans', sans-serif;color:#000;white-space:nowrap;letter-spacing:0.556px;-webkit-text-stroke:0.12px #000;right:297.44px;text-align:right;">61,753.42</span><span style="position:absolute;top:294.54px;font:400 15px/15px 'Liberation Sans', sans-serif;color:#000;white-space:nowrap;letter-spacing:0.556px;-webkit-text-stroke:0.12px #000;right:180.44px;text-align:right;">61,740.00</span><span style="position:absolute;top:294.54px;font:400 15px/15px 'Liberation Sans', sans-serif;color:#000;white-space:nowrap;letter-spacing:0.556px;-webkit-text-stroke:0.12px #000;right:63.44px;text-align:right;">61,740.00</span><span style="position:absolute;top:294.54px;font:400 15px/15px 'Liberation Sans', sans-serif;color:#000;white-space:nowrap;letter-spacing:0.556px;-webkit-text-stroke:0.12px #000;right:-14.56px;text-align:right;">66,640.00</span><span style="position:absolute;top:318.54px;font:400 15px/15px 'Liberation Sans', sans-serif;color:#000;white-space:nowrap;letter-spacing:0.839px;-webkit-text-stroke:0.12px #000;left:64.50px;">Income Tax</span><span style="position:absolute;top:318.54px;font:400 15px/15px 'Liberation Sans', sans-serif;color:#000;white-space:nowrap;letter-spacing:0.649px;-webkit-text-stroke:0.12px #000;right:1123.35px;text-align:right;">0.00</span><span style="position:absolute;top:318.54px;font:400 15px/15px 'Liberation Sans', sans-serif;color:#000;white-space:nowrap;letter-spacing:0.556px;-webkit-text-stroke:0.12px #000;right:999.44px;text-align:right;">18,522.00</span><span style="position:absolute;top:318.54px;font:400 15px/15px 'Liberation Sans', sans-serif;color:#000;white-space:nowrap;letter-spacing:0.556px;-webkit-text-stroke:0.12px #000;right:882.44px;text-align:right;">18,522.00</span><span style="position:absolute;top:318.54px;font:400 15px/15px 'Liberation Sans', sans-serif;color:#000;white-space:nowrap;letter-spacing:0.556px;-webkit-text-stroke:0.12px #000;right:765.44px;text-align:right;">18,526.03</span><span style="position:absolute;top:318.54px;font:400 15px/15px 'Liberation Sans', sans-serif;color:#000;white-space:nowrap;letter-spacing:0.556px;-webkit-text-stroke:0.12px #000;right:648.44px;text-align:right;">18,522.00</span><span style="position:absolute;top:318.54px;font:400 15px/15px 'Liberation Sans', sans-serif;color:#000;white-space:nowrap;letter-spacing:0.556px;-webkit-text-stroke:0.12px #000;right:531.44px;text-align:right;">18,522.00</span><span style="position:absolute;top:318.54px;font:400 15px/15px 'Liberation Sans', sans-serif;color:#000;white-space:nowrap;letter-spacing:0.556px;-webkit-text-stroke:0.12px #000;right:414.44px;text-align:right;">18,522.00</span><span style="position:absolute;top:318.54px;font:400 15px/15px 'Liberation Sans', sans-serif;color:#000;white-space:nowrap;letter-spacing:0.556px;-webkit-text-stroke:0.12px #000;right:297.44px;text-align:right;">18,526.03</span><span style="position:absolute;top:318.54px;font:400 15px/15px 'Liberation Sans', sans-serif;color:#000;white-space:nowrap;letter-spacing:0.556px;-webkit-text-stroke:0.12px #000;right:180.44px;text-align:right;">18,522.00</span><span style="position:absolute;top:318.54px;font:400 15px/15px 'Liberation Sans', sans-serif;color:#000;white-space:nowrap;letter-spacing:0.556px;-webkit-text-stroke:0.12px #000;right:63.44px;text-align:right;">18,522.00</span><span style="position:absolute;top:318.54px;font:400 15px/15px 'Liberation Sans', sans-serif;color:#000;white-space:nowrap;letter-spacing:0.556px;-webkit-text-stroke:0.12px #000;right:-14.56px;text-align:right;">19,992.00</span><span style="position:absolute;top:342.54px;font:400 15px/15px 'Liberation Sans', sans-serif;color:#000;white-space:nowrap;letter-spacing:0.728px;-webkit-text-stroke:0.12px #000;left:64.50px;">Unlevered net income</span><span style="position:absolute;top:342.54px;font:400 15px/15px 'Liberation Sans', sans-serif;color:#000;white-space:nowrap;letter-spacing:0.531px;-webkit-text-stroke:0.12px #000;right:1123.47px;text-align:right;">-75,060.00</span><span style="position:absolute;top:342.54px;font:400 15px/15px 'Liberation Sans', sans-serif;color:#000;white-space:nowrap;letter-spacing:0.556px;-webkit-text-stroke:0.12px #000;right:999.44px;text-align:right;">80,262.00</span><span style="position:absolute;top:342.54px;font:400 15px/15px 'Liberation Sans', sans-serif;color:#000;white-space:nowrap;letter-spacing:0.556px;-webkit-text-stroke:0.12px #000;right:882.44px;text-align:right;">80,262.00</span><span style="position:absolute;top:342.54px;font:400 15px/15px 'Liberation Sans', sans-serif;color:#000;white-space:nowrap;letter-spacing:0.556px;-webkit-text-stroke:0.12px #000;right:765.44px;text-align:right;">80,279.45</span><span style="position:absolute;top:342.54px;font:400 15px/15px 'Liberation Sans', sans-serif;color:#000;white-space:nowrap;letter-spacing:0.556px;-webkit-text-stroke:0.12px #000;right:648.44px;text-align:right;">80,262.00</span><span style="position:absolute;top:342.54px;font:400 15px/15px 'Liberation Sans', sans-serif;color:#000;white-space:nowrap;letter-spacing:0.556px;-webkit-text-stroke:0.12px #000;right:531.44px;text-align:right;">80,262.00</span><span style="position:absolute;top:342.54px;font:400 15px/15px 'Liberation Sans', sans-serif;color:#000;white-space:nowrap;letter-spacing:0.556px;-webkit-text-stroke:0.12px #000;right:414.44px;text-align:right;">80,262.00</span><span style="position:absolute;top:342.54px;font:400 15px/15px 'Liberation Sans', sans-serif;color:#000;white-space:nowrap;letter-spacing:0.556px;-webkit-text-stroke:0.12px #000;right:297.44px;text-align:right;">80,279.45</span><span style="position:absolute;top:342.54px;font:400 15px/15px 'Liberation Sans', sans-serif;color:#000;white-space:nowrap;letter-spacing:0.556px;-webkit-text-stroke:0.12px #000;right:180.44px;text-align:right;">80,262.00</span><span style="position:absolute;top:342.54px;font:400 15px/15px 'Liberation Sans', sans-serif;color:#000;white-space:nowrap;letter-spacing:0.556px;-webkit-text-stroke:0.12px #000;right:63.44px;text-align:right;">80,262.00</span><span style="position:absolute;top:342.54px;font:400 15px/15px 'Liberation Sans', sans-serif;color:#000;white-space:nowrap;letter-spacing:0.556px;-webkit-text-stroke:0.12px #000;right:-14.56px;text-align:right;">86,632.00</span><span style="position:absolute;top:366.54px;font:400 15px/15px 'Liberation Sans', sans-serif;color:#000;white-space:nowrap;letter-spacing:0.558px;-webkit-text-stroke:0.12px #000;left:64.50px;">(+) Depreciation</span><span style="position:absolute;top:366.54px;font:400 15px/15px 'Liberation Sans', sans-serif;color:#000;white-space:nowrap;letter-spacing:0.531px;-webkit-text-stroke:0.12px #000;right:1123.47px;text-align:right;">-49,000.00</span><span style="position:absolute;top:366.54px;font:400 15px/15px 'Liberation Sans', sans-serif;color:#000;white-space:nowrap;letter-spacing:0.528px;-webkit-text-stroke:0.12px #000;right:999.47px;text-align:right;">-4,900.00</span><span style="position:absolute;top:366.54px;font:400 15px/15px 'Liberation Sans', sans-serif;color:#000;white-space:nowrap;letter-spacing:0.528px;-webkit-text-stroke:0.12px #000;right:882.47px;text-align:right;">-4,900.00</span><span style="position:absolute;top:366.54px;font:400 15px/15px 'Liberation Sans', sans-serif;color:#000;white-space:nowrap;letter-spacing:0.528px;-webkit-text-stroke:0.12px #000;right:765.47px;text-align:right;">-4,913.42</span><span style="position:absolute;top:366.54px;font:400 15px/15px 'Liberation Sans', sans-serif;color:#000;white-space:nowrap;letter-spacing:0.528px;-webkit-text-stroke:0.12px #000;right:648.47px;text-align:right;">-4,900.00</span><span style="position:absolute;top:366.54px;font:400 15px/15px 'Liberation Sans', sans-serif;color:#000;white-space:nowrap;letter-spacing:0.528px;-webkit-text-stroke:0.12px #000;right:531.47px;text-align:right;">-4,900.00</span><span style="position:absolute;top:366.54px;font:400 15px/15px 'Liberation Sans', sans-serif;color:#000;white-space:nowrap;letter-spacing:0.528px;-webkit-text-stroke:0.12px #000;right:414.47px;text-align:right;">-4,900.00</span><span style="position:absolute;top:366.54px;font:400 15px/15px 'Liberation Sans', sans-serif;color:#000;white-space:nowrap;letter-spacing:0.528px;-webkit-text-stroke:0.12px #000;right:297.47px;text-align:right;">-4,913.42</span><span style="position:absolute;top:366.54px;font:400 15px/15px 'Liberation Sans', sans-serif;color:#000;white-space:nowrap;letter-spacing:0.528px;-webkit-text-stroke:0.12px #000;right:180.47px;text-align:right;">-4,900.00</span><span style="position:absolute;top:366.54px;font:400 15px/15px 'Liberation Sans', sans-serif;color:#000;white-space:nowrap;letter-spacing:0.528px;-webkit-text-stroke:0.12px #000;right:63.47px;text-align:right;">-4,900.00</span><span style="position:absolute;top:366.54px;font:400 15px/15px 'Liberation Sans', sans-serif;color:#000;white-space:nowrap;letter-spacing:0.528px;-webkit-text-stroke:0.12px #000;right:-14.53px;text-align:right;">-4,900.00</span><span style="position:absolute;top:390.54px;font:400 15px/15px 'Liberation Sans', sans-serif;color:#000;white-space:nowrap;letter-spacing:0.009px;-webkit-text-stroke:0.12px #000;left:64.50px;">(-) CapEx</span><span style="position:absolute;top:390.54px;font:400 15px/15px 'Liberation Sans', sans-serif;color:#000;white-space:nowrap;letter-spacing:0.534px;-webkit-text-stroke:0.12px #000;right:1123.47px;text-align:right;">-293,900.00</span><span style="position:absolute;top:390.54px;font:400 15px/15px 'Liberation Sans', sans-serif;color:#000;white-space:nowrap;letter-spacing:0.649px;-webkit-text-stroke:0.12px #000;right:999.35px;text-align:right;">0.00</span><span style="position:absolute;top:390.54px;font:400 15px/15px 'Liberation Sans', sans-serif;color:#000;white-space:nowrap;letter-spacing:0.649px;-webkit-text-stroke:0.12px #000;right:882.35px;text-align:right;">0.00</span><span style="position:absolute;top:390.54px;font:400 15px/15px 'Liberation Sans', sans-serif;color:#000;white-space:nowrap;letter-spacing:0.649px;-webkit-text-stroke:0.12px #000;right:765.35px;text-align:right;">0.00</span><span style="position:absolute;top:390.54px;font:400 15px/15px 'Liberation Sans', sans-serif;color:#000;white-space:nowrap;letter-spacing:0.649px;-webkit-text-stroke:0.12px #000;right:648.35px;text-align:right;">0.00</span><span style="position:absolute;top:390.54px;font:400 15px/15px 'Liberation Sans', sans-serif;color:#000;white-space:nowrap;letter-spacing:0.649px;-webkit-text-stroke:0.12px #000;right:531.35px;text-align:right;">0.00</span><span style="position:absolute;top:390.54px;font:400 15px/15px 'Liberation Sans', sans-serif;color:#000;white-space:nowrap;letter-spacing:0.649px;-webkit-text-stroke:0.12px #000;right:414.35px;text-align:right;">0.00</span><span style="position:absolute;top:390.54px;font:400 15px/15px 'Liberation Sans', sans-serif;color:#000;white-space:nowrap;letter-spacing:0.649px;-webkit-text-stroke:0.12px #000;right:297.35px;text-align:right;">0.00</span><span style="position:absolute;top:390.54px;font:400 15px/15px 'Liberation Sans', sans-serif;color:#000;white-space:nowrap;letter-spacing:0.649px;-webkit-text-stroke:0.12px #000;right:180.35px;text-align:right;">0.00</span><span style="position:absolute;top:390.54px;font:400 15px/15px 'Liberation Sans', sans-serif;color:#000;white-space:nowrap;letter-spacing:0.649px;-webkit-text-stroke:0.12px #000;right:63.35px;text-align:right;">0.00</span><span style="position:absolute;top:390.54px;font:400 15px/15px 'Liberation Sans', sans-serif;color:#000;white-space:nowrap;letter-spacing:0.649px;-webkit-text-stroke:0.12px #000;right:-14.65px;text-align:right;">0.00</span><span style="position:absolute;top:414.54px;font:400 15px/15px 'Liberation Sans', sans-serif;color:#000;white-space:nowrap;letter-spacing:0.118px;-webkit-text-stroke:0.12px #000;left:64.50px;">(+) WC</span><span style="position:absolute;top:414.54px;font:400 15px/15px 'Liberation Sans', sans-serif;color:#000;white-space:nowrap;letter-spacing:0.556px;-webkit-text-stroke:0.12px #000;right:1123.44px;text-align:right;">40,000.00</span><span style="position:absolute;top:414.54px;font:400 15px/15px 'Liberation Sans', sans-serif;color:#000;white-space:nowrap;letter-spacing:0.556px;-webkit-text-stroke:0.12px #000;right:999.44px;text-align:right;">270,900.00</span><span style="position:absolute;top:414.54px;font:400 15px/15px 'Liberation Sans', sans-serif;color:#000;white-space:nowrap;letter-spacing:0.556px;-webkit-text-stroke:0.12px #000;right:882.44px;text-align:right;">4,900.00</span><span style="position:absolute;top:414.54px;font:400 15px/15px 'Liberation Sans', sans-serif;color:#000;white-space:nowrap;letter-spacing:0.556px;-webkit-text-stroke:0.12px #000;right:765.44px;text-align:right;">4,913.42</span><span style="position:absolute;top:414.54px;font:400 15px/15px 'Liberation Sans', sans-serif;color:#000;white-space:nowrap;letter-spacing:0.556px;-webkit-text-stroke:0.12px #000;right:648.44px;text-align:right;">4,900.00</span><span style="position:absolute;top:414.54px;font:400 15px/15px 'Liberation Sans', sans-serif;color:#000;white-space:nowrap;letter-spacing:0.556px;-webkit-text-stroke:0.12px #000;right:531.44px;text-align:right;">4,900.00</span><span style="position:absolute;top:414.54px;font:400 15px/15px 'Liberation Sans', sans-serif;color:#000;white-space:nowrap;letter-spacing:0.556px;-webkit-text-stroke:0.12px #000;right:414.44px;text-align:right;">4,900.00</span><span style="position:absolute;top:414.54px;font:400 15px/15px 'Liberation Sans', sans-serif;color:#000;white-space:nowrap;letter-spacing:0.556px;-webkit-text-stroke:0.12px #000;right:297.44px;text-align:right;">4,913.42</span><span style="position:absolute;top:414.54px;font:400 15px/15px 'Liberation Sans', sans-serif;color:#000;white-space:nowrap;letter-spacing:0.556px;-webkit-text-stroke:0.12px #000;right:180.44px;text-align:right;">4,900.00</span><span style="position:absolute;top:414.54px;font:400 15px/15px 'Liberation Sans', sans-serif;color:#000;white-space:nowrap;letter-spacing:0.556px;-webkit-text-stroke:0.12px #000;right:63.44px;text-align:right;">4,900.00</span><span style="position:absolute;top:414.54px;font:400 15px/15px 'Liberation Sans', sans-serif;color:#000;white-space:nowrap;letter-spacing:0.528px;-webkit-text-stroke:0.12px #000;right:-14.53px;text-align:right;">-4,900.00</span><span style="position:absolute;top:438.54px;font:400 15px/15px 'Liberation Sans', sans-serif;color:#000;white-space:nowrap;letter-spacing:0.723px;-webkit-text-stroke:0.12px #000;left:64.50px;">Unlevered free cash flow</span><span style="position:absolute;top:438.54px;font:400 15px/15px 'Liberation Sans', sans-serif;color:#000;white-space:nowrap;letter-spacing:0.534px;-webkit-text-stroke:0.12px #000;right:1123.47px;text-align:right;">-377,960.00</span><span style="position:absolute;top:438.54px;font:400 15px/15px 'Liberation Sans', sans-serif;color:#000;white-space:nowrap;letter-spacing:0.556px;-webkit-text-stroke:0.12px #000;right:999.44px;text-align:right;">346,262.00</span><span style="position:absolute;top:438.54px;font:400 15px/15px 'Liberation Sans', sans-serif;color:#000;white-space:nowrap;letter-spacing:0.556px;-webkit-text-stroke:0.12px #000;right:882.44px;text-align:right;">80,262.00</span><span style="position:absolute;top:438.54px;font:400 15px/15px 'Liberation Sans', sans-serif;color:#000;white-space:nowrap;letter-spacing:0.556px;-webkit-text-stroke:0.12px #000;right:765.44px;text-align:right;">80,279.45</span><span style="position:absolute;top:438.54px;font:400 15px/15px 'Liberation Sans', sans-serif;color:#000;white-space:nowrap;letter-spacing:0.556px;-webkit-text-stroke:0.12px #000;right:648.44px;text-align:right;">80,262.00</span><span style="position:absolute;top:438.54px;font:400 15px/15px 'Liberation Sans', sans-serif;color:#000;white-space:nowrap;letter-spacing:0.556px;-webkit-text-stroke:0.12px #000;right:531.44px;text-align:right;">80,262.00</span><span style="position:absolute;top:438.54px;font:400 15px/15px 'Liberation Sans', sans-serif;color:#000;white-space:nowrap;letter-spacing:0.556px;-webkit-text-stroke:0.12px #000;right:414.44px;text-align:right;">80,262.00</span><span style="position:absolute;top:438.54px;font:400 15px/15px 'Liberation Sans', sans-serif;color:#000;white-space:nowrap;letter-spacing:0.556px;-webkit-text-stroke:0.12px #000;right:297.44px;text-align:right;">80,279.45</span><span style="position:absolute;top:438.54px;font:400 15px/15px 'Liberation Sans', sans-serif;color:#000;white-space:nowrap;letter-spacing:0.556px;-webkit-text-stroke:0.12px #000;right:180.44px;text-align:right;">80,262.00</span><span style="position:absolute;top:438.54px;font:400 15px/15px 'Liberation Sans', sans-serif;color:#000;white-space:nowrap;letter-spacing:0.556px;-webkit-text-stroke:0.12px #000;right:63.44px;text-align:right;">80,262.00</span><span style="position:absolute;top:438.54px;font:400 15px/15px 'Liberation Sans', sans-serif;color:#000;white-space:nowrap;letter-spacing:0.556px;-webkit-text-stroke:0.12px #000;right:-14.56px;text-align:right;">76,832.00</span><span style="position:absolute;top:462.54px;font:400 15px/15px 'Liberation Sans', sans-serif;color:#000;white-space:nowrap;letter-spacing:0.669px;-webkit-text-stroke:0.12px #000;left:64.50px;">Discount Factor</span><span style="position:absolute;top:462.54px;font:400 15px/15px 'Liberation Sans', sans-serif;color:#000;white-space:nowrap;letter-spacing:0.649px;-webkit-text-stroke:0.12px #000;right:1123.35px;text-align:right;">1.00</span><span style="position:absolute;top:462.54px;font:400 15px/15px 'Liberation Sans', sans-serif;color:#000;white-space:nowrap;letter-spacing:0.649px;-webkit-text-stroke:0.12px #000;right:999.35px;text-align:right;">1.00</span><span style="position:absolute;top:462.54px;font:400 15px/15px 'Liberation Sans', sans-serif;color:#000;white-space:nowrap;letter-spacing:0.649px;-webkit-text-stroke:0.12px #000;right:882.35px;text-align:right;">1.00</span><span style="position:absolute;top:462.54px;font:400 15px/15px 'Liberation Sans', sans-serif;color:#000;white-space:nowrap;letter-spacing:0.649px;-webkit-text-stroke:0.12px #000;right:765.35px;text-align:right;">1.00</span><span style="position:absolute;top:462.54px;font:400 15px/15px 'Liberation Sans', sans-serif;color:#000;white-space:nowrap;letter-spacing:0.649px;-webkit-text-stroke:0.12px #000;right:648.35px;text-align:right;">1.00</span><span style="position:absolute;top:462.54px;font:400 15px/15px 'Liberation Sans', sans-serif;color:#000;white-space:nowrap;letter-spacing:0.649px;-webkit-text-stroke:0.12px #000;right:531.35px;text-align:right;">1.00</span><span style="position:absolute;top:462.54px;font:400 15px/15px 'Liberation Sans', sans-serif;color:#000;white-space:nowrap;letter-spacing:0.649px;-webkit-text-stroke:0.12px #000;right:414.35px;text-align:right;">1.00</span><span style="position:absolute;top:462.54px;font:400 15px/15px 'Liberation Sans', sans-serif;color:#000;white-space:nowrap;letter-spacing:0.649px;-webkit-text-stroke:0.12px #000;right:297.35px;text-align:right;">1.00</span><span style="position:absolute;top:462.54px;font:400 15px/15px 'Liberation Sans', sans-serif;color:#000;white-space:nowrap;letter-spacing:0.649px;-webkit-text-stroke:0.12px #000;right:180.35px;text-align:right;">1.00</span><span style="position:absolute;top:462.54px;font:400 15px/15px 'Liberation Sans', sans-serif;color:#000;white-space:nowrap;letter-spacing:0.649px;-webkit-text-stroke:0.12px #000;right:63.35px;text-align:right;">1.00</span><span style="position:absolute;top:462.54px;font:400 15px/15px 'Liberation Sans', sans-serif;color:#000;white-space:nowrap;letter-spacing:0.649px;-webkit-text-stroke:0.12px #000;right:-14.65px;text-align:right;">1.00</span><span style="position:absolute;top:558.54px;font:400 15px/15px 'Liberation Sans', sans-serif;color:#000;white-space:nowrap;letter-spacing:-1.297px;-webkit-text-stroke:0.12px #000;left:64.50px;">DCFF</span><span style="position:absolute;top:558.54px;font:400 15px/15px 'Liberation Sans', sans-serif;color:#000;white-space:nowrap;letter-spacing:0.534px;-webkit-text-stroke:0.12px #000;right:1123.47px;text-align:right;">-377,960.00</span><span style="position:absolute;top:558.54px;font:400 15px/15px 'Liberation Sans', sans-serif;color:#000;white-space:nowrap;letter-spacing:0.556px;-webkit-text-stroke:0.12px #000;right:999.44px;text-align:right;">346,262.00</span><span style="position:absolute;top:558.54px;font:400 15px/15px 'Liberation Sans', sans-serif;color:#000;white-space:nowrap;letter-spacing:0.556px;-webkit-text-stroke:0.12px #000;right:882.44px;text-align:right;">80,262.00</span><span style="position:absolute;top:558.54px;font:400 15px/15px 'Liberation Sans', sans-serif;color:#000;white-space:nowrap;letter-spacing:0.556px;-webkit-text-stroke:0.12px #000;right:765.44px;text-align:right;">80,279.45</span><span style="position:absolute;top:558.54px;font:400 15px/15px 'Liberation Sans', sans-serif;color:#000;white-space:nowrap;letter-spacing:0.556px;-webkit-text-stroke:0.12px #000;right:648.44px;text-align:right;">80,262.00</span><span style="position:absolute;top:558.54px;font:400 15px/15px 'Liberation Sans', sans-serif;color:#000;white-space:nowrap;letter-spacing:0.556px;-webkit-text-stroke:0.12px #000;right:531.44px;text-align:right;">80,262.00</span><span style="position:absolute;top:558.54px;font:400 15px/15px 'Liberation Sans', sans-serif;color:#000;white-space:nowrap;letter-spacing:0.556px;-webkit-text-stroke:0.12px #000;right:414.44px;text-align:right;">80,262.00</span><span style="position:absolute;top:558.54px;font:400 15px/15px 'Liberation Sans', sans-serif;color:#000;white-space:nowrap;letter-spacing:0.556px;-webkit-text-stroke:0.12px #000;right:297.44px;text-align:right;">80,279.45</span><span style="position:absolute;top:558.54px;font:400 15px/15px 'Liberation Sans', sans-serif;color:#000;white-space:nowrap;letter-spacing:0.556px;-webkit-text-stroke:0.12px #000;right:180.44px;text-align:right;">80,262.00</span><span style="position:absolute;top:558.54px;font:400 15px/15px 'Liberation Sans', sans-serif;color:#000;white-space:nowrap;letter-spacing:0.556px;-webkit-text-stroke:0.12px #000;right:63.44px;text-align:right;">80,262.00</span><span style="position:absolute;top:558.54px;font:400 15px/15px 'Liberation Sans', sans-serif;color:#000;white-space:nowrap;letter-spacing:0.556px;-webkit-text-stroke:0.12px #000;right:-14.56px;text-align:right;">76,832.00</span><span style="position:absolute;top:702.54px;font:400 15px/15px 'Liberation Sans', sans-serif;color:#000;white-space:nowrap;letter-spacing:0.553px;-webkit-text-stroke:0.12px #000;left:64.50px;">Terminal Cash Flow</span><span style="position:absolute;top:702.54px;font:400 15px/15px 'Liberation Sans', sans-serif;color:#000;white-space:nowrap;letter-spacing:0.649px;-webkit-text-stroke:0.12px #000;right:1123.35px;text-align:right;">0.00</span><span style="position:absolute;top:702.54px;font:400 15px/15px 'Liberation Sans', sans-serif;color:#000;white-space:nowrap;letter-spacing:0.649px;-webkit-text-stroke:0.12px #000;right:999.35px;text-align:right;">0.00</span><span style="position:absolute;top:702.54px;font:400 15px/15px 'Liberation Sans', sans-serif;color:#000;white-space:nowrap;letter-spacing:0.649px;-webkit-text-stroke:0.12px #000;right:882.35px;text-align:right;">0.00</span><span style="position:absolute;top:702.54px;font:400 15px/15px 'Liberation Sans', sans-serif;color:#000;white-space:nowrap;letter-spacing:0.649px;-webkit-text-stroke:0.12px #000;right:765.35px;text-align:right;">0.00</span><span style="position:absolute;top:702.54px;font:400 15px/15px 'Liberation Sans', sans-serif;color:#000;white-space:nowrap;letter-spacing:0.649px;-webkit-text-stroke:0.12px #000;right:648.35px;text-align:right;">0.00</span><span style="position:absolute;top:702.54px;font:400 15px/15px 'Liberation Sans', sans-serif;color:#000;white-space:nowrap;letter-spacing:0.649px;-webkit-text-stroke:0.12px #000;right:531.35px;text-align:right;">0.00</span><span style="position:absolute;top:702.54px;font:400 15px/15px 'Liberation Sans', sans-serif;color:#000;white-space:nowrap;letter-spacing:0.649px;-webkit-text-stroke:0.12px #000;right:414.35px;text-align:right;">0.00</span><span style="position:absolute;top:702.54px;font:400 15px/15px 'Liberation Sans', sans-serif;color:#000;white-space:nowrap;letter-spacing:0.649px;-webkit-text-stroke:0.12px #000;right:297.35px;text-align:right;">0.00</span><span style="position:absolute;top:702.54px;font:400 15px/15px 'Liberation Sans', sans-serif;color:#000;white-space:nowrap;letter-spacing:0.649px;-webkit-text-stroke:0.12px #000;right:180.35px;text-align:right;">0.00</span><span style="position:absolute;top:702.54px;font:400 15px/15px 'Liberation Sans', sans-serif;color:#000;white-space:nowrap;letter-spacing:0.649px;-webkit-text-stroke:0.12px #000;right:63.35px;text-align:right;">0.00</span><span style="position:absolute;top:702.54px;font:400 15px/15px 'Liberation Sans', sans-serif;color:#000;white-space:nowrap;letter-spacing:0.649px;-webkit-text-stroke:0.12px #000;right:-14.65px;text-align:right;">0.00</span><span style="position:absolute;top:726.54px;font:400 15px/15px 'Liberation Sans', sans-serif;color:#000;white-space:nowrap;letter-spacing:0.519px;-webkit-text-stroke:0.12px #000;left:64.50px;">Total Free Cash Flow To Firm</span><span style="position:absolute;top:726.54px;font:400 15px/15px 'Liberation Sans', sans-serif;color:#000;white-space:nowrap;letter-spacing:0.534px;-webkit-text-stroke:0.12px #000;right:1123.47px;text-align:right;">-377,960.00</span><span style="position:absolute;top:726.54px;font:400 15px/15px 'Liberation Sans', sans-serif;color:#000;white-space:nowrap;letter-spacing:0.556px;-webkit-text-stroke:0.12px #000;right:999.44px;text-align:right;">346,262.00</span><span style="position:absolute;top:726.54px;font:400 15px/15px 'Liberation Sans', sans-serif;color:#000;white-space:nowrap;letter-spacing:0.556px;-webkit-text-stroke:0.12px #000;right:882.44px;text-align:right;">80,262.00</span><span style="position:absolute;top:726.54px;font:400 15px/15px 'Liberation Sans', sans-serif;color:#000;white-space:nowrap;letter-spacing:0.556px;-webkit-text-stroke:0.12px #000;right:765.44px;text-align:right;">80,279.45</span><span style="position:absolute;top:726.54px;font:400 15px/15px 'Liberation Sans', sans-serif;color:#000;white-space:nowrap;letter-spacing:0.556px;-webkit-text-stroke:0.12px #000;right:648.44px;text-align:right;">80,262.00</span><span style="position:absolute;top:726.54px;font:400 15px/15px 'Liberation Sans', sans-serif;color:#000;white-space:nowrap;letter-spacing:0.556px;-webkit-text-stroke:0.12px #000;right:531.44px;text-align:right;">80,262.00</span><span style="position:absolute;top:726.54px;font:400 15px/15px 'Liberation Sans', sans-serif;color:#000;white-space:nowrap;letter-spacing:0.556px;-webkit-text-stroke:0.12px #000;right:414.44px;text-align:right;">80,262.00</span><span style="position:absolute;top:726.54px;font:400 15px/15px 'Liberation Sans', sans-serif;color:#000;white-space:nowrap;letter-spacing:0.556px;-webkit-text-stroke:0.12px #000;right:297.44px;text-align:right;">80,279.45</span><span style="position:absolute;top:726.54px;font:400 15px/15px 'Liberation Sans', sans-serif;color:#000;white-space:nowrap;letter-spacing:0.556px;-webkit-text-stroke:0.12px #000;right:180.44px;text-align:right;">80,262.00</span><span style="position:absolute;top:726.54px;font:400 15px/15px 'Liberation Sans', sans-serif;color:#000;white-space:nowrap;letter-spacing:0.556px;-webkit-text-stroke:0.12px #000;right:63.44px;text-align:right;">80,262.00</span><span style="position:absolute;top:726.54px;font:400 15px/15px 'Liberation Sans', sans-serif;color:#000;white-space:nowrap;letter-spacing:0.556px;-webkit-text-stroke:0.12px #000;right:-14.56px;text-align:right;">76,832.00</span><span style="position:absolute;top:750.54px;font:400 15px/15px 'Liberation Sans', sans-serif;color:#000;white-space:nowrap;letter-spacing:-1.297px;-webkit-text-stroke:0.12px #000;left:64.50px;">DCFF</span><span style="position:absolute;top:750.54px;font:400 15px/15px 'Liberation Sans', sans-serif;color:#000;white-space:nowrap;letter-spacing:0.534px;-webkit-text-stroke:0.12px #000;right:1123.47px;text-align:right;">-377,960.00</span><span style="position:absolute;top:750.54px;font:400 15px/15px 'Liberation Sans', sans-serif;color:#000;white-space:nowrap;letter-spacing:0.556px;-webkit-text-stroke:0.12px #000;right:999.44px;text-align:right;">346,262.00</span><span style="position:absolute;top:750.54px;font:400 15px/15px 'Liberation Sans', sans-serif;color:#000;white-space:nowrap;letter-spacing:0.556px;-webkit-text-stroke:0.12px #000;right:882.44px;text-align:right;">80,262.00</span><span style="position:absolute;top:750.54px;font:400 15px/15px 'Liberation Sans', sans-serif;color:#000;white-space:nowrap;letter-spacing:0.556px;-webkit-text-stroke:0.12px #000;right:765.44px;text-align:right;">80,279.45</span><span style="position:absolute;top:750.54px;font:400 15px/15px 'Liberation Sans', sans-serif;color:#000;white-space:nowrap;letter-spacing:0.556px;-webkit-text-stroke:0.12px #000;right:648.44px;text-align:right;">80,262.00</span><span style="position:absolute;top:750.54px;font:400 15px/15px 'Liberation Sans', sans-serif;color:#000;white-space:nowrap;letter-spacing:0.556px;-webkit-text-stroke:0.12px #000;right:531.44px;text-align:right;">80,262.00</span><span style="position:absolute;top:750.54px;font:400 15px/15px 'Liberation Sans', sans-serif;color:#000;white-space:nowrap;letter-spacing:0.556px;-webkit-text-stroke:0.12px #000;right:414.44px;text-align:right;">80,262.00</span><span style="position:absolute;top:750.54px;font:400 15px/15px 'Liberation Sans', sans-serif;color:#000;white-space:nowrap;letter-spacing:0.556px;-webkit-text-stroke:0.12px #000;right:297.44px;text-align:right;">80,279.45</span><span style="position:absolute;top:750.54px;font:400 15px/15px 'Liberation Sans', sans-serif;color:#000;white-space:nowrap;letter-spacing:0.556px;-webkit-text-stroke:0.12px #000;right:180.44px;text-align:right;">80,262.00</span><span style="position:absolute;top:750.54px;font:400 15px/15px 'Liberation Sans', sans-serif;color:#000;white-space:nowrap;letter-spacing:0.556px;-webkit-text-stroke:0.12px #000;right:63.44px;text-align:right;">80,262.00</span><span style="position:absolute;top:750.54px;font:400 15px/15px 'Liberation Sans', sans-serif;color:#000;white-space:nowrap;letter-spacing:0.556px;-webkit-text-stroke:0.12px #000;right:-14.56px;text-align:right;">76,832.00</span><span style="position:absolute;top:894.54px;font:400 15px/15px 'Liberation Sans', sans-serif;color:#000;white-space:nowrap;letter-spacing:0.553px;-webkit-text-stroke:0.12px #000;left:64.50px;">Terminal Cash Flow</span><span style="position:absolute;top:894.54px;font:400 15px/15px 'Liberation Sans', sans-serif;color:#000;white-space:nowrap;letter-spacing:0.649px;-webkit-text-stroke:0.12px #000;right:1123.35px;text-align:right;">0.00</span><span style="position:absolute;top:894.54px;font:400 15px/15px 'Liberation Sans', sans-serif;color:#000;white-space:nowrap;letter-spacing:0.649px;-webkit-text-stroke:0.12px #000;right:999.35px;text-align:right;">0.00</span><span style="position:absolute;top:894.54px;font:400 15px/15px 'Liberation Sans', sans-serif;color:#000;white-space:nowrap;letter-spacing:0.649px;-webkit-text-stroke:0.12px #000;right:882.35px;text-align:right;">0.00</span><span style="position:absolute;top:894.54px;font:400 15px/15px 'Liberation Sans', sans-serif;color:#000;white-space:nowrap;letter-spacing:0.649px;-webkit-text-stroke:0.12px #000;right:765.35px;text-align:right;">0.00</span><span style="position:absolute;top:894.54px;font:400 15px/15px 'Liberation Sans', sans-serif;color:#000;white-space:nowrap;letter-spacing:0.649px;-webkit-text-stroke:0.12px #000;right:648.35px;text-align:right;">0.00</span><span style="position:absolute;top:894.54px;font:400 15px/15px 'Liberation Sans', sans-serif;color:#000;white-space:nowrap;letter-spacing:0.649px;-webkit-text-stroke:0.12px #000;right:531.35px;text-align:right;">0.00</span><span style="position:absolute;top:894.54px;font:400 15px/15px 'Liberation Sans', sans-serif;color:#000;white-space:nowrap;letter-spacing:0.649px;-webkit-text-stroke:0.12px #000;right:414.35px;text-align:right;">0.00</span><span style="position:absolute;top:894.54px;font:400 15px/15px 'Liberation Sans', sans-serif;color:#000;white-space:nowrap;letter-spacing:0.649px;-webkit-text-stroke:0.12px #000;right:297.35px;text-align:right;">0.00</span><span style="position:absolute;top:894.54px;font:400 15px/15px 'Liberation Sans', sans-serif;color:#000;white-space:nowrap;letter-spacing:0.649px;-webkit-text-stroke:0.12px #000;right:180.35px;text-align:right;">0.00</span><span style="position:absolute;top:894.54px;font:400 15px/15px 'Liberation Sans', sans-serif;color:#000;white-space:nowrap;letter-spacing:0.649px;-webkit-text-stroke:0.12px #000;right:63.35px;text-align:right;">0.00</span><span style="position:absolute;top:894.54px;font:400 15px/15px 'Liberation Sans', sans-serif;color:#000;white-space:nowrap;letter-spacing:0.649px;-webkit-text-stroke:0.12px #000;right:-14.65px;text-align:right;">0.00</span><span style="position:absolute;top:918.54px;font:400 15px/15px 'Liberation Sans', sans-serif;color:#000;white-space:nowrap;letter-spacing:0.519px;-webkit-text-stroke:0.12px #000;left:64.50px;">Total Free Cash Flow To Firm</span><span style="position:absolute;top:918.54px;font:400 15px/15px 'Liberation Sans', sans-serif;color:#000;white-space:nowrap;letter-spacing:0.534px;-webkit-text-stroke:0.12px #000;right:1123.47px;text-align:right;">-377,960.00</span><span style="position:absolute;top:918.54px;font:400 15px/15px 'Liberation Sans', sans-serif;color:#000;white-space:nowrap;letter-spacing:0.556px;-webkit-text-stroke:0.12px #000;right:999.44px;text-align:right;">346,262.00</span><span style="position:absolute;top:918.54px;font:400 15px/15px 'Liberation Sans', sans-serif;color:#000;white-space:nowrap;letter-spacing:0.556px;-webkit-text-stroke:0.12px #000;right:882.44px;text-align:right;">80,262.00</span><span style="position:absolute;top:918.54px;font:400 15px/15px 'Liberation Sans', sans-serif;color:#000;white-space:nowrap;letter-spacing:0.556px;-webkit-text-stroke:0.12px #000;right:765.44px;text-align:right;">80,279.45</span><span style="position:absolute;top:918.54px;font:400 15px/15px 'Liberation Sans', sans-serif;color:#000;white-space:nowrap;letter-spacing:0.556px;-webkit-text-stroke:0.12px #000;right:648.44px;text-align:right;">80,262.00</span><span style="position:absolute;top:918.54px;font:400 15px/15px 'Liberation Sans', sans-serif;color:#000;white-space:nowrap;letter-spacing:0.556px;-webkit-text-stroke:0.12px #000;right:531.44px;text-align:right;">80,262.00</span><span style="position:absolute;top:918.54px;font:400 15px/15px 'Liberation Sans', sans-serif;color:#000;white-space:nowrap;letter-spacing:0.556px;-webkit-text-stroke:0.12px #000;right:414.44px;text-align:right;">80,262.00</span><span style="position:absolute;top:918.54px;font:400 15px/15px 'Liberation Sans', sans-serif;color:#000;white-space:nowrap;letter-spacing:0.556px;-webkit-text-stroke:0.12px #000;right:297.44px;text-align:right;">80,279.45</span><span style="position:absolute;top:918.54px;font:400 15px/15px 'Liberation Sans', sans-serif;color:#000;white-space:nowrap;letter-spacing:0.556px;-webkit-text-stroke:0.12px #000;right:180.44px;text-align:right;">80,262.00</span><span style="position:absolute;top:918.54px;font:400 15px/15px 'Liberation Sans', sans-serif;color:#000;white-space:nowrap;letter-spacing:0.556px;-webkit-text-stroke:0.12px #000;right:63.44px;text-align:right;">80,262.00</span><span style="position:absolute;top:918.54px;font:400 15px/15px 'Liberation Sans', sans-serif;color:#000;white-space:nowrap;letter-spacing:0.556px;-webkit-text-stroke:0.12px #000;right:-14.56px;text-align:right;">76,832.00</span><span style="position:absolute;top:942.54px;font:400 15px/15px 'Liberation Sans', sans-serif;color:#000;white-space:nowrap;letter-spacing:-1.297px;-webkit-text-stroke:0.12px #000;left:64.50px;">DCFF</span><span style="position:absolute;top:942.54px;font:400 15px/15px 'Liberation Sans', sans-serif;color:#000;white-space:nowrap;letter-spacing:0.534px;-webkit-text-stroke:0.12px #000;right:1123.47px;text-align:right;">-377,960.00</span><span style="position:absolute;top:942.54px;font:400 15px/15px 'Liberation Sans', sans-serif;color:#000;white-space:nowrap;letter-spacing:0.556px;-webkit-text-stroke:0.12px #000;right:999.44px;text-align:right;">346,262.00</span><span style="position:absolute;top:942.54px;font:400 15px/15px 'Liberation Sans', sans-serif;color:#000;white-space:nowrap;letter-spacing:0.556px;-webkit-text-stroke:0.12px #000;right:882.44px;text-align:right;">80,262.00</span><span style="position:absolute;top:942.54px;font:400 15px/15px 'Liberation Sans', sans-serif;color:#000;white-space:nowrap;letter-spacing:0.556px;-webkit-text-stroke:0.12px #000;right:765.44px;text-align:right;">80,279.45</span><span style="position:absolute;top:942.54px;font:400 15px/15px 'Liberation Sans', sans-serif;color:#000;white-space:nowrap;letter-spacing:0.556px;-webkit-text-stroke:0.12px #000;right:648.44px;text-align:right;">80,262.00</span><span style="position:absolute;top:942.54px;font:400 15px/15px 'Liberation Sans', sans-serif;color:#000;white-space:nowrap;letter-spacing:0.556px;-webkit-text-stroke:0.12px #000;right:531.44px;text-align:right;">80,262.00</span><span style="position:absolute;top:942.54px;font:400 15px/15px 'Liberation Sans', sans-serif;color:#000;white-space:nowrap;letter-spacing:0.556px;-webkit-text-stroke:0.12px #000;right:414.44px;text-align:right;">80,262.00</span><span style="position:absolute;top:942.54px;font:400 15px/15px 'Liberation Sans', sans-serif;color:#000;white-space:nowrap;letter-spacing:0.556px;-webkit-text-stroke:0.12px #000;right:297.44px;text-align:right;">80,279.45</span><span style="position:absolute;top:942.54px;font:400 15px/15px 'Liberation Sans', sans-serif;color:#000;white-space:nowrap;letter-spacing:0.556px;-webkit-text-stroke:0.12px #000;right:180.44px;text-align:right;">80,262.00</span><span style="position:absolute;top:942.54px;font:400 15px/15px 'Liberation Sans', sans-serif;color:#000;white-space:nowrap;letter-spacing:0.556px;-webkit-text-stroke:0.12px #000;right:63.44px;text-align:right;">80,262.00</span><span style="position:absolute;top:942.54px;font:400 15px/15px 'Liberation Sans', sans-serif;color:#000;white-space:nowrap;letter-spacing:0.556px;-webkit-text-stroke:0.12px #000;right:-14.56px;text-align:right;">76,832.00</span><span style="position:absolute;top:582.54px;font:400 15px/15px 'Liberation Sans', sans-serif;color:#000;white-space:nowrap;letter-spacing:-0.296px;-webkit-text-stroke:0.12px #000;left:64.50px;">NPV</span><span style="position:absolute;top:582.54px;font:400 15px/15px 'Liberation Sans', sans-serif;color:#000;white-space:nowrap;letter-spacing:0.531px;-webkit-text-stroke:0.12px #000;right:1247.97px;text-align:right;">1,435,120.36</span><span style="position:absolute;top:774.54px;font:400 15px/15px 'Liberation Sans', sans-serif;color:#000;white-space:nowrap;letter-spacing:-0.296px;-webkit-text-stroke:0.12px #000;left:64.50px;">NPV</span><span style="position:absolute;top:774.54px;font:400 15px/15px 'Liberation Sans', sans-serif;color:#000;white-space:nowrap;letter-spacing:0.531px;-webkit-text-stroke:0.12px #000;right:1247.97px;text-align:right;">1,435,120.36</span><span style="position:absolute;top:966.54px;font:400 15px/15px 'Liberation Sans', sans-serif;color:#000;white-space:nowrap;letter-spacing:-0.296px;-webkit-text-stroke:0.12px #000;left:64.50px;">NPV</span><span style="position:absolute;top:966.54px;font:400 15px/15px 'Liberation Sans', sans-serif;color:#000;white-space:nowrap;letter-spacing:0.531px;-webkit-text-stroke:0.12px #000;right:1247.97px;text-align:right;">1,435,120.36</span><span style="position:absolute;top:606.54px;font:400 15px/15px 'Liberation Sans', sans-serif;color:#000;white-space:nowrap;letter-spacing:-1.166px;-webkit-text-stroke:0.12px #000;left:64.50px;">IRR</span><span style="position:absolute;top:606.54px;font:400 15px/15px 'Liberation Sans', sans-serif;color:#000;white-space:nowrap;letter-spacing:0.678px;-webkit-text-stroke:0.12px #000;right:1247.82px;text-align:right;">42.08%</span><span style="position:absolute;top:798.54px;font:400 15px/15px 'Liberation Sans', sans-serif;color:#000;white-space:nowrap;letter-spacing:-1.166px;-webkit-text-stroke:0.12px #000;left:64.50px;">IRR</span><span style="position:absolute;top:798.54px;font:400 15px/15px 'Liberation Sans', sans-serif;color:#000;white-space:nowrap;letter-spacing:0.678px;-webkit-text-stroke:0.12px #000;right:1247.82px;text-align:right;">42.08%</span><span style="position:absolute;top:990.54px;font:400 15px/15px 'Liberation Sans', sans-serif;color:#000;white-space:nowrap;letter-spacing:-1.166px;-webkit-text-stroke:0.12px #000;left:64.50px;">IRR</span><span style="position:absolute;top:990.54px;font:400 15px/15px 'Liberation Sans', sans-serif;color:#000;white-space:nowrap;letter-spacing:0.678px;-webkit-text-stroke:0.12px #000;right:1247.82px;text-align:right;">42.08%</span><span style="position:absolute;top:510.54px;font:400 15px/15px 'Liberation Sans', sans-serif;color:#000;white-space:nowrap;letter-spacing:0.811px;-webkit-text-stroke:0.12px #000;left:64.50px;">Project Performance w/o Terminal Value</span><span style="position:absolute;top:654.54px;font:400 15px/15px 'Liberation Sans', sans-serif;color:#000;white-space:nowrap;letter-spacing:0.779px;-webkit-text-stroke:0.12px #000;left:64.50px;">Project Performance with Terminal Value - Perpetuity Method</span><span style="position:absolute;top:846.54px;font:400 15px/15px 'Liberation Sans', sans-serif;color:#000;white-space:nowrap;letter-spacing:0.697px;-webkit-text-stroke:0.12px #000;left:64.50px;">Project Performance with Terminal Value - EBITDA Multiples Method</span>
</div>
<span style="position:absolute;top:23.13px;font:400 15.5px/15.5px 'Liberation Sans', sans-serif;color:#fff;white-space:nowrap;letter-spacing:-0.453px;;left:225.50px;">Fintech Mobile App MRR.xlsx</span><span style="position:absolute;top:23.13px;font:400 15.5px/15.5px 'Liberation Sans', sans-serif;color:#fff;white-space:nowrap;;left:426.00px;">-</span><span style="position:absolute;top:23.13px;font:400 15.5px/15.5px 'Liberation Sans', sans-serif;color:#fff;white-space:nowrap;letter-spacing:-1.351px;;left:440.00px;">Excel</span><span style="position:absolute;top:21.71px;font:400 16px/16px 'Liberation Sans', sans-serif;color:#0f6b38;white-space:nowrap;letter-spacing:-0.239px;;left:792.50px;">Search</span><span style="position:absolute;top:25.78px;font:400 10.5px/10.5px 'Liberation Sans', sans-serif;color:#fff;white-space:nowrap;;left:1703.00px;">RS</span><span style="position:absolute;top:72.30px;font:400 16.5px/16.5px 'Liberation Sans', sans-serif;color:#262626;white-space:nowrap;letter-spacing:-0.762px;;left:27.30px;">File</span><span style="position:absolute;top:72.30px;font:400 16.5px/16.5px 'Liberation Sans', sans-serif;color:#262626;white-space:nowrap;letter-spacing:0.396px;;left:84.30px;">Home</span><span style="position:absolute;top:72.30px;font:400 16.5px/16.5px 'Liberation Sans', sans-serif;color:#262626;white-space:nowrap;letter-spacing:0.147px;;left:154.20px;">Insert</span><span style="position:absolute;top:72.30px;font:400 16.5px/16.5px 'Liberation Sans', sans-serif;color:#262626;white-space:nowrap;letter-spacing:0.066px;;left:220.30px;">Draw</span><span style="position:absolute;top:72.30px;font:400 16.5px/16.5px 'Liberation Sans', sans-serif;color:#262626;white-space:nowrap;letter-spacing:-0.056px;;left:284.30px;">Page Layout</span><span style="position:absolute;top:72.30px;font:400 16.5px/16.5px 'Liberation Sans', sans-serif;color:#262626;white-space:nowrap;letter-spacing:-0.009px;;left:401.30px;">Formulas</span><span style="position:absolute;top:72.30px;font:400 16.5px/16.5px 'Liberation Sans', sans-serif;color:#262626;white-space:nowrap;letter-spacing:-0.084px;;left:494.70px;">Data</span><span style="position:absolute;top:72.30px;font:400 16.5px/16.5px 'Liberation Sans', sans-serif;color:#262626;white-space:nowrap;letter-spacing:-0.480px;;left:554.50px;">Review</span><span style="position:absolute;top:72.30px;font:400 16.5px/16.5px 'Liberation Sans', sans-serif;color:#262626;white-space:nowrap;letter-spacing:0.012px;;left:631.50px;">View</span><span style="position:absolute;top:72.30px;font:400 16.5px/16.5px 'Liberation Sans', sans-serif;color:#262626;white-space:nowrap;letter-spacing:0.186px;;left:691.30px;">Developer</span><span style="position:absolute;top:72.30px;font:400 16.5px/16.5px 'Liberation Sans', sans-serif;color:#262626;white-space:nowrap;letter-spacing:0.088px;;left:792.50px;">Help</span><span style="position:absolute;top:72.30px;font:400 16.5px/16.5px 'Liberation Sans', sans-serif;color:#262626;white-space:nowrap;letter-spacing:0.356px;;left:851.30px;">Acrobat</span><span style="position:absolute;top:72.30px;font:400 16.5px/16.5px 'Liberation Sans', sans-serif;color:#262626;white-space:nowrap;letter-spacing:-0.093px;;left:935.90px;">Power Pivot</span><span style="position:absolute;top:71.30px;font:400 16.5px/16.5px 'Liberation Sans', sans-serif;color:#fff;white-space:nowrap;letter-spacing:-0.632px;-webkit-text-stroke:0.45px #fff;left:1842.50px;">Share</span><span style="position:absolute;top:1085.88px;font:400 17px/17px 'Liberation Sans', sans-serif;color:#262626;white-space:nowrap;letter-spacing:-0.477px;;left:153.00px;">General Ex</span><span style="position:absolute;top:1085.88px;font:400 17px/17px 'Liberation Sans', sans-serif;color:#262626;white-space:nowrap;letter-spacing:0.237px;;left:268.00px;">Working Capital</span><span style="position:absolute;top:1085.88px;font:400 17px/17px 'Liberation Sans', sans-serif;color:#262626;white-space:nowrap;letter-spacing:-1.069px;;left:425.75px;">CapEx</span><span style="position:absolute;top:1085.88px;font:400 17px/17px 'Liberation Sans', sans-serif;color:#262626;white-space:nowrap;letter-spacing:0.178px;;left:505.30px;">Funding</span><span style="position:absolute;top:1085.88px;font:400 17px/17px 'Liberation Sans', sans-serif;color:#262626;white-space:nowrap;letter-spacing:0.203px;;left:603.00px;">Income Statement</span><span style="position:absolute;top:1085.88px;font:400 17px/17px 'Liberation Sans', sans-serif;color:#262626;white-space:nowrap;letter-spacing:-0.338px;;left:778.00px;">Cash Flow</span><span style="position:absolute;top:1085.88px;font:400 17px/17px 'Liberation Sans', sans-serif;color:#262626;white-space:nowrap;letter-spacing:-0.299px;;left:890.00px;">Balance Sheet</span><span style="position:absolute;top:1085.88px;font:400 17px/17px 'Liberation Sans', sans-serif;color:#1a1a1a;white-space:nowrap;letter-spacing:-0.072px;;left:1032.50px;">Salary Assumptions</span><span style="position:absolute;top:1085.88px;font:400 17px/17px 'Liberation Sans', sans-serif;color:#1a1a1a;white-space:nowrap;letter-spacing:0.370px;;left:1218.80px;">Marketing</span><span style="position:absolute;top:1081.88px;font:400 17px/17px 'Liberation Sans', sans-serif;color:#1a1a1a;white-space:nowrap;letter-spacing:0.394px;-webkit-text-stroke:0.45px #1a1a1a;left:1329.40px;">Investor Performance</span><span style="position:absolute;top:1120.79px;font:400 13.5px/13.5px 'Liberation Sans', sans-serif;color:#3b3b3b;white-space:nowrap;letter-spacing:-0.943px;;left:15.50px;">Ready</span><span style="position:absolute;top:1120.54px;font:700 13.8px/13.8px 'Liberation Sans', sans-serif;color:#262626;white-space:nowrap;letter-spacing:-0.544px;;left:137.50px;">Accessibility: Investigate</span><span style="position:absolute;top:1120.79px;font:400 13.5px/13.5px 'Liberation Sans', sans-serif;color:#3b3b3b;white-space:nowrap;letter-spacing:-1.443px;;left:1878.60px;">100%</span>
</body></html>
